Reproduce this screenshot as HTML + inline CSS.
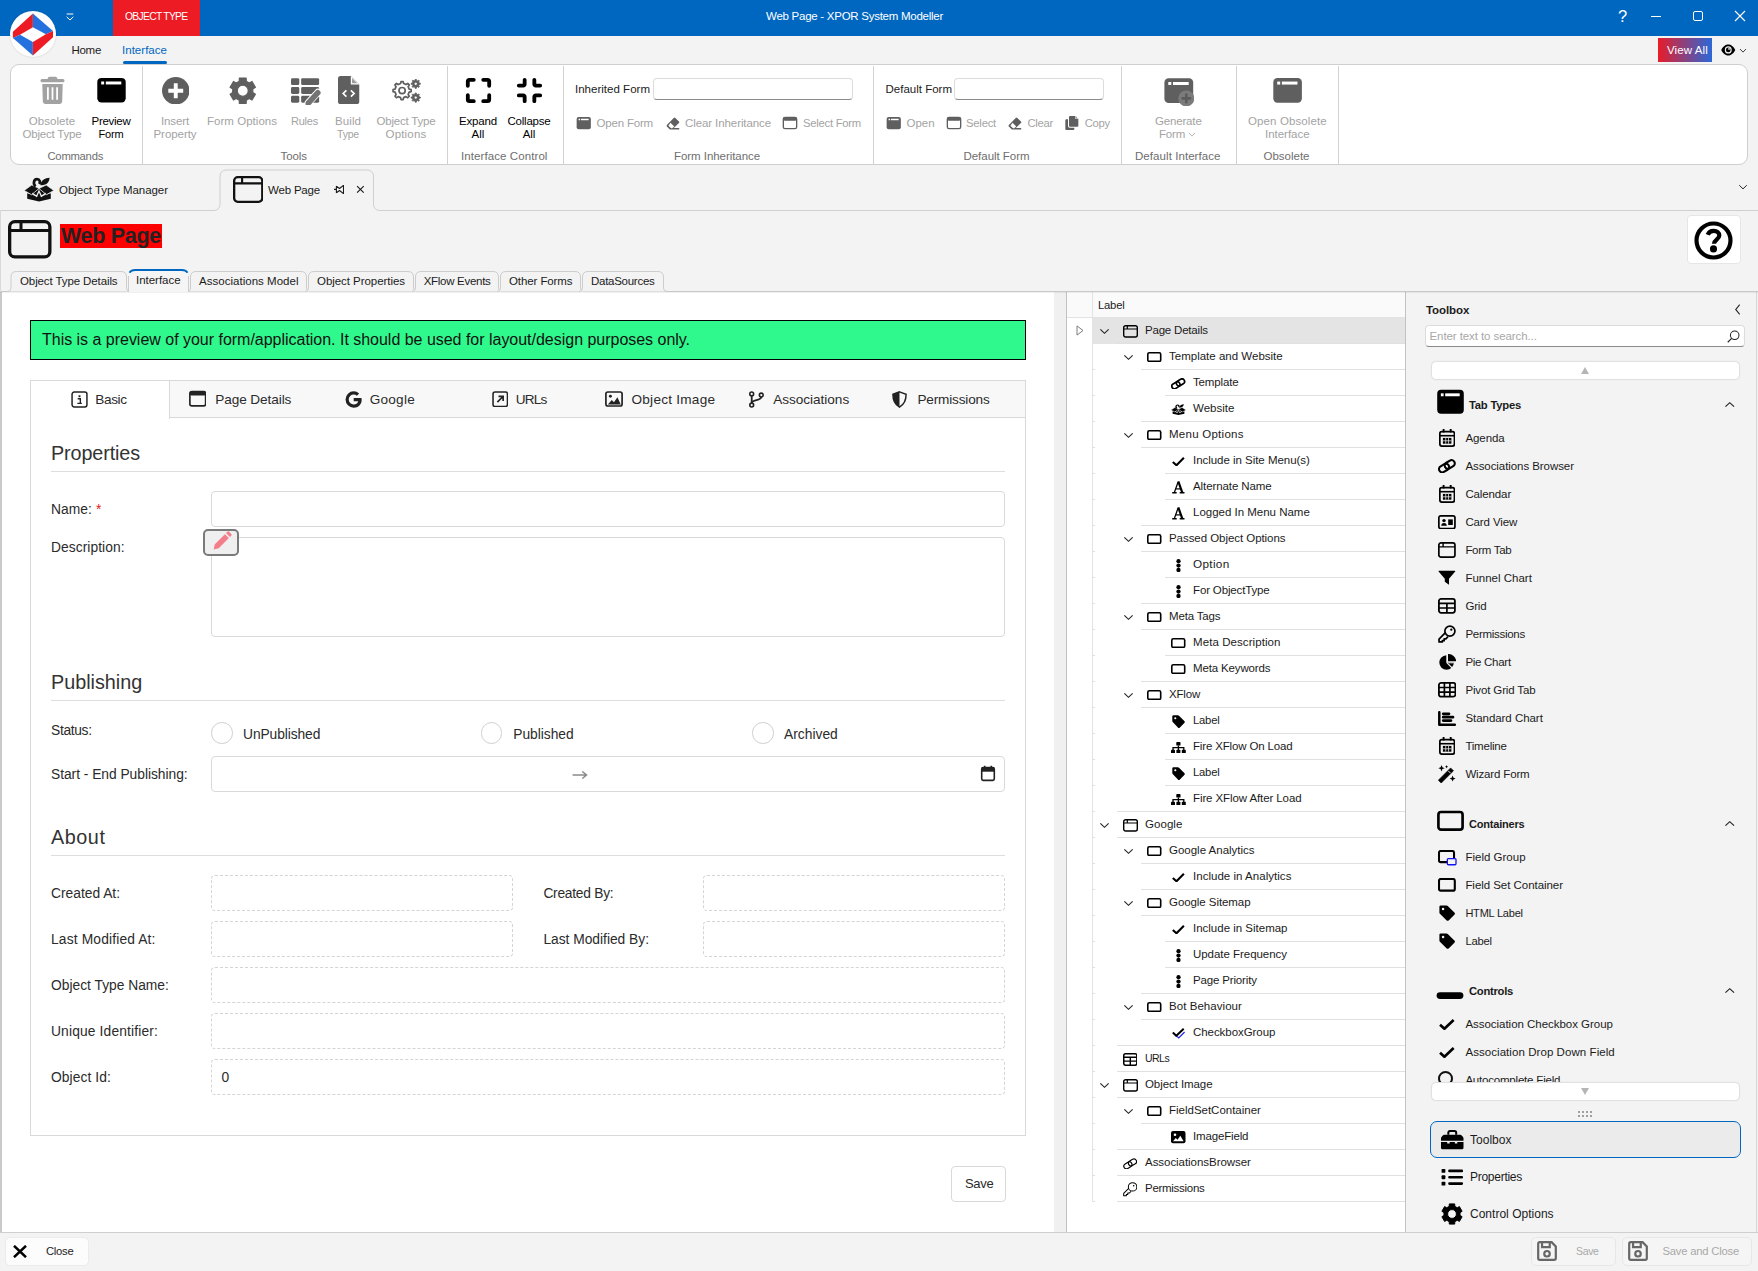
<!DOCTYPE html>
<html><head><meta charset="utf-8"><title>Web Page - XPOR System Modeller</title>
<style>
html,body{margin:0;padding:0;}
body{width:1758px;height:1271px;position:relative;overflow:hidden;background:#f3f3f3;font-family:"Liberation Sans",sans-serif;}
body div,body span.t,body svg{position:absolute;box-sizing:border-box;}
span.t{white-space:pre;}
</style></head><body>
<div style="left:0px;top:0px;width:1758px;height:36px;background:#0067c0;"></div>
<div style="left:113px;top:0px;width:87px;height:36px;background:#ec1b24;"></div>
<span class="t" style="left:125.00px;top:8.90px;font-size:10.4px;line-height:15px;color:#fff;letter-spacing:-0.746px;">OBJECT TYPE</span>
<span class="t" style="left:766.00px;top:8.00px;font-size:11.5px;line-height:16px;color:#fff;letter-spacing:-0.262px;">Web Page - XPOR System Modeller</span>
<svg style="left:66px;top:12.5px;" width="8" height="8" viewBox="0 0 8 8" preserveAspectRatio="none"><path d="M.700 1H7.300M.700 3.800l3.300 3.200L7.300 3.800" stroke="#fff" stroke-width="1" fill="none"/></svg>
<span class="t" style="left:1617.91px;top:4.80px;font-size:16.5px;line-height:23px;color:#fff;letter-spacing:0.000px;">?</span>
<div style="left:1651px;top:16px;width:10px;height:1px;background:#fff;"></div>
<div style="left:1693px;top:11px;width:10px;height:10px;border:1px solid #fff;border-radius:2px;"></div>
<svg style="left:1734px;top:10px;" width="12" height="12" viewBox="0 0 12 12" preserveAspectRatio="none"><path d="M1 1l10 10M11 1L1 11" stroke="#fff" stroke-width="1.100"/></svg>
<div style="left:10px;top:10.5px;width:46px;height:46px;border-radius:50%;background:#fdfdfd;box-shadow:0 0 2px rgba(0,0,0,.18);"></div>
<svg style="left:0px;top:0px;" width="66" height="66" viewBox="0 0 66 66" preserveAspectRatio="none"><path d="M32.900 13.600L12.900 31.700V38L20 34.700 32.900 27.200Z" fill="#ed1c24"/><path d="M32.900 13.600V27.200L45.900 34.250 53 31Z" fill="#2470de"/><path d="M53 31V37.200L32.900 55.600V41.900L45.900 34.250Z" fill="#ed1c24"/><path d="M12.900 38L32.900 55.600V41.900L20 34.700Z" fill="#2470de"/></svg>
<span class="t" style="left:71.50px;top:41.50px;font-size:11.5px;line-height:16px;color:#1b1b1b;letter-spacing:-0.294px;">Home</span>
<span class="t" style="left:122.00px;top:41.50px;font-size:11.5px;line-height:16px;color:#0067c0;letter-spacing:0.028px;">Interface</span>
<div style="left:123px;top:61px;width:43.5px;height:3px;background:#0067c0;border-radius:2px;"></div>
<div style="left:1658px;top:38px;width:54px;height:24px;background:linear-gradient(90deg,#e81c28 0%,#2a68d8 100%);"></div>
<span class="t" style="left:1667.00px;top:41.90px;font-size:11.5px;line-height:16px;color:#fff;letter-spacing:0.093px;">View All</span>
<svg style="left:1721px;top:44.3px;" width="14.5" height="11.8" viewBox="0 0 18 14" preserveAspectRatio="none"><path d="M.300 7C3 2 6 .500 9 .500s6 1.500 8.700 6.500C15 12 12 13.500 9 13.500S3 12 .300 7Z" fill="#000"/><circle cx="9" cy="7" r="4.300" fill="#f3f3f3"/><circle cx="9" cy="7" r="2.900" fill="#000"/><circle cx="10" cy="5.800" r="1.100" fill="#f3f3f3"/></svg>
<svg style="left:1739px;top:47.5px;" width="8" height="5.5" viewBox="0 0 12 8" preserveAspectRatio="none"><path d="M1.500 1.500L6 6l4.500-4.500" stroke="#111" stroke-width="1.200" fill="none"/></svg>
<div style="left:10px;top:64px;width:1737.5px;height:100.5px;background:#fff;border:1px solid #cfcfcf;border-radius:9px;"></div>
<div style="left:142.0px;top:65.5px;width:1px;height:98.5px;background:#d2d2d2;"></div>
<div style="left:447.0px;top:65.5px;width:1px;height:98.5px;background:#d2d2d2;"></div>
<div style="left:562.5px;top:65.5px;width:1px;height:98.5px;background:#d2d2d2;"></div>
<div style="left:872.5px;top:65.5px;width:1px;height:98.5px;background:#d2d2d2;"></div>
<div style="left:1121.0px;top:65.5px;width:1px;height:98.5px;background:#d2d2d2;"></div>
<div style="left:1236.0px;top:65.5px;width:1px;height:98.5px;background:#d2d2d2;"></div>
<div style="left:1338.0px;top:65.5px;width:1px;height:98.5px;background:#d2d2d2;"></div>
<svg style="left:40.0px;top:76px;" width="25" height="28" viewBox="0 0 24 26" preserveAspectRatio="none"><rect x="0.500" y="2.800" width="23" height="3" rx="1.400" fill="#a2a2a2"/><rect x="7.500" y="0.600" width="9" height="4" rx="1.600" fill="#a2a2a2"/><path d="M2.200 7.500h19.600l-.500 16.200a2.300 2.300 0 0 1-2.300 2.200H5a2.300 2.300 0 0 1-2.300-2.200Z" fill="#a2a2a2"/><path d="M7.600 10.500v11.500M12 10.500v11.500M16.400 10.500v11.500" stroke="#fff" stroke-width="1.700"/></svg>
<span class="t" style="left:28.75px;top:113.00px;font-size:11.5px;line-height:16px;color:#a3a3a3;letter-spacing:0.059px;">Obsolete</span>
<span class="t" style="left:22.50px;top:126.00px;font-size:11.5px;line-height:16px;color:#a3a3a3;letter-spacing:-0.196px;">Object Type</span>
<svg style="left:95.7px;top:74px;" width="31" height="31" viewBox="0 0 24 24" preserveAspectRatio="none"><rect x="1" y="3" width="22" height="19" rx="3.200" fill="#000"/><rect x="7.600" y="5.800" width="12" height="2.300" fill="#fff"/><rect x="4" y="5.800" width="2.300" height="2.300" fill="#fff"/></svg>
<span class="t" style="left:91.50px;top:113.00px;font-size:11.5px;line-height:16px;color:#000;letter-spacing:-0.271px;">Preview</span>
<span class="t" style="left:98.50px;top:126.00px;font-size:11.0px;line-height:16px;color:#000;letter-spacing:-0.165px;">Form</span>
<svg style="left:161.55px;top:76.5px;" width="27.5" height="27.5" viewBox="0 0 24 24" preserveAspectRatio="none"><circle cx="12" cy="12" r="12" fill="#5f5f5f"/><path d="M12 5.500v13M5.500 12h13" stroke="#fff" stroke-width="3.400"/></svg>
<span class="t" style="left:161.00px;top:113.00px;font-size:11.5px;line-height:16px;color:#a3a3a3;letter-spacing:-0.126px;">Insert</span>
<span class="t" style="left:153.50px;top:126.00px;font-size:11.5px;line-height:16px;color:#a3a3a3;letter-spacing:-0.057px;">Property</span>
<svg style="left:228.75px;top:76.5px;" width="27.5" height="27.5" viewBox="0 0 27.500 27.500" preserveAspectRatio="none"><path d="M10.24 4.17 L10.36 1.10 L17.14 1.10 L17.26 4.17 L20.29 5.92 L23.01 4.49 L26.40 10.36 L23.80 12.00 L23.80 15.50 L26.40 17.14 L23.01 23.01 L20.29 21.58 L17.26 23.33 L17.14 26.40 L10.36 26.40 L10.24 23.33 L7.21 21.58 L4.49 23.01 L1.10 17.14 L3.70 15.50 L3.70 12.00 L1.10 10.36 L4.49 4.49 L7.21 5.92Z M8.25 13.75 a5.5 5.5 0 1 0 11.0 0 a5.5 5.5 0 1 0 -11.0 0Z" fill="#5f5f5f" fill-rule="evenodd" stroke="#5f5f5f" stroke-width="1.200" stroke-linejoin="round"/></svg>
<span class="t" style="left:207.00px;top:113.00px;font-size:11.5px;line-height:16px;color:#a3a3a3;letter-spacing:0.029px;">Form Options</span>
<svg style="left:291.0px;top:77.8px;" width="29.6" height="27.6" viewBox="0 0 30 28" preserveAspectRatio="none"><g fill="#5f5f5f"><rect x="0" y=".200" width="8.400" height="7" rx="1.400"/><rect x="10.300" y=".200" width="18.200" height="7" rx="1.400"/><rect x="0" y="9.200" width="8.400" height="7" rx="1.400"/><rect x="10.300" y="9.200" width="18.200" height="7" rx="1.400"/><rect x="0" y="18.100" width="8.400" height="7" rx="1.400"/><rect x="10.300" y="18.100" width="18.200" height="7" rx="1.400"/></g><path d="M17.500 25.300L27.300 14.600" stroke="#fff" stroke-width="7.400" stroke-linecap="round"/><path d="M17.600 25.400L27.200 14.900" stroke="#737373" stroke-width="5.600" stroke-linecap="round"/><path d="M14.600 27.800l1.200-4.600 3.600 3.400Z" fill="#737373"/></svg>
<span class="t" style="left:291.00px;top:113.00px;font-size:11.0px;line-height:16px;color:#a3a3a3;letter-spacing:-0.224px;">Rules</span>
<svg style="left:338.475px;top:76px;" width="21.25" height="28" viewBox="0 0 21.250 28" preserveAspectRatio="none"><path d="M2.600 0H12.800L21.250 8.450V25.400a2.600 2.600 0 0 1-2.600 2.600H2.600A2.600 2.600 0 0 1 0 25.400V2.600A2.600 2.600 0 0 1 2.600 0Z" fill="#5f5f5f"/><path d="M12.800 0V8.450H21.250Z" fill="#fff"/><path d="M14 2V7.250H19.250Z" fill="#9c9c9c"/><path d="M8.400 14.300l-3.200 3.200 3.200 3.200M12.900 14.300l3.200 3.200-3.200 3.200" stroke="#fff" stroke-width="1.700" fill="none"/></svg>
<span class="t" style="left:335.00px;top:113.00px;font-size:11.5px;line-height:16px;color:#a3a3a3;letter-spacing:0.086px;">Build</span>
<span class="t" style="left:337.00px;top:126.00px;font-size:10.5px;line-height:16px;color:#a3a3a3;letter-spacing:-0.191px;">Type</span>
<svg style="left:391.5px;top:79px;" width="29" height="24" viewBox="0 0 29 24" preserveAspectRatio="none"><path d="M8.58 4.56 L9.03 2.56 L11.17 2.56 L11.62 4.56 L14.01 5.55 L15.73 4.45 L17.25 5.97 L16.15 7.69 L17.14 10.08 L19.14 10.53 L19.14 12.67 L17.14 13.12 L16.15 15.51 L17.25 17.23 L15.73 18.75 L14.01 17.65 L11.62 18.64 L11.17 20.64 L9.03 20.64 L8.58 18.64 L6.19 17.65 L4.47 18.75 L2.95 17.23 L4.05 15.51 L3.06 13.12 L1.06 12.67 L1.06 10.53 L3.06 10.08 L4.05 7.69 L2.95 5.97 L4.47 4.45 L6.19 5.55Z" fill="none" stroke="#5f5f5f" stroke-width="1.700" stroke-linejoin="round"/><circle cx="10.100" cy="11.600" r="3.100" fill="none" stroke="#5f5f5f" stroke-width="1.700"/><path d="M22.93 1.40 L23.23 0.13 L24.27 0.13 L24.57 1.40 L25.58 1.82 L26.69 1.13 L27.42 1.86 L26.73 2.97 L27.15 3.98 L28.42 4.28 L28.42 5.32 L27.15 5.62 L26.73 6.63 L27.42 7.74 L26.69 8.47 L25.58 7.78 L24.57 8.20 L24.27 9.47 L23.23 9.47 L22.93 8.20 L21.92 7.78 L20.81 8.47 L20.08 7.74 L20.77 6.63 L20.35 5.62 L19.08 5.32 L19.08 4.28 L20.35 3.98 L20.77 2.97 L20.08 1.86 L20.81 1.13 L21.92 1.82Z M22.25 4.80 a1.5 1.5 0 1 0 3.0 0 a1.5 1.5 0 1 0 -3.0 0Z" fill="#5f5f5f" fill-rule="evenodd" stroke="#5f5f5f" stroke-width=".700" stroke-linejoin="round"/><path d="M22.93 15.20 L23.23 13.93 L24.27 13.93 L24.57 15.20 L25.58 15.62 L26.69 14.93 L27.42 15.66 L26.73 16.77 L27.15 17.78 L28.42 18.08 L28.42 19.12 L27.15 19.42 L26.73 20.43 L27.42 21.54 L26.69 22.27 L25.58 21.58 L24.57 22.00 L24.27 23.27 L23.23 23.27 L22.93 22.00 L21.92 21.58 L20.81 22.27 L20.08 21.54 L20.77 20.43 L20.35 19.42 L19.08 19.12 L19.08 18.08 L20.35 17.78 L20.77 16.77 L20.08 15.66 L20.81 14.93 L21.92 15.62Z M22.25 18.60 a1.5 1.5 0 1 0 3.0 0 a1.5 1.5 0 1 0 -3.0 0Z" fill="#5f5f5f" fill-rule="evenodd" stroke="#5f5f5f" stroke-width=".700" stroke-linejoin="round"/></svg>
<span class="t" style="left:376.50px;top:113.00px;font-size:11.5px;line-height:16px;color:#a3a3a3;letter-spacing:-0.196px;">Object Type</span>
<span class="t" style="left:385.50px;top:126.00px;font-size:11.5px;line-height:16px;color:#a3a3a3;letter-spacing:0.196px;">Options</span>
<svg style="left:464.5px;top:77px;" width="27" height="27" viewBox="0 0 24 24" preserveAspectRatio="none"><path d="M2.500 7.800V4a1.500 1.500 0 0 1 1.500-1.500H7.800M16.200 2.500H20a1.500 1.500 0 0 1 1.500 1.500V7.800M21.500 16.200V20a1.500 1.500 0 0 1-1.500 1.500H16.200M7.800 21.500H4a1.500 1.500 0 0 1-1.500-1.500V16.200" stroke="#000" stroke-width="3.400" fill="none" stroke-linecap="round"/></svg>
<span class="t" style="left:459.00px;top:113.00px;font-size:11.5px;line-height:16px;color:#000;letter-spacing:-0.167px;">Expand</span>
<span class="t" style="left:471.50px;top:126.00px;font-size:11.5px;line-height:16px;color:#000;letter-spacing:0.073px;">All</span>
<svg style="left:515.5px;top:77px;" width="27" height="27" viewBox="0 0 24 24" preserveAspectRatio="none"><path d="M2.500 7.600H6.500a1.200 1.200 0 0 0 1.200-1.200V2.500M16.300 2.500V6.400a1.200 1.200 0 0 0 1.200 1.200H21.500M21.500 16.400H17.500a1.200 1.200 0 0 0-1.200 1.200V21.500M7.700 21.500V17.600a1.200 1.200 0 0 0-1.200-1.200H2.500" stroke="#000" stroke-width="3.400" fill="none" stroke-linecap="round"/></svg>
<span class="t" style="left:507.50px;top:113.00px;font-size:11.5px;line-height:16px;color:#000;letter-spacing:-0.218px;">Collapse</span>
<span class="t" style="left:522.75px;top:126.00px;font-size:11.5px;line-height:16px;color:#000;letter-spacing:-0.094px;">All</span>
<span class="t" style="left:47.50px;top:148.00px;font-size:11.25px;line-height:16px;color:#6e6e6e;letter-spacing:-0.252px;">Commands</span>
<span class="t" style="left:280.50px;top:148.00px;font-size:11.5px;line-height:16px;color:#6e6e6e;letter-spacing:-0.069px;">Tools</span>
<span class="t" style="left:461.00px;top:148.00px;font-size:11.5px;line-height:16px;color:#6e6e6e;letter-spacing:0.088px;">Interface Control</span>
<span class="t" style="left:674.00px;top:148.00px;font-size:11.5px;line-height:16px;color:#6e6e6e;letter-spacing:-0.057px;">Form Inheritance</span>
<span class="t" style="left:963.50px;top:148.00px;font-size:11.5px;line-height:16px;color:#6e6e6e;letter-spacing:-0.038px;">Default Form</span>
<span class="t" style="left:1135.00px;top:148.00px;font-size:11.5px;line-height:16px;color:#6e6e6e;letter-spacing:0.066px;">Default Interface</span>
<span class="t" style="left:1263.50px;top:148.00px;font-size:11.5px;line-height:16px;color:#6e6e6e;letter-spacing:-0.003px;">Obsolete</span>
<span class="t" style="left:575.00px;top:81.00px;font-size:11.5px;line-height:16px;color:#1b1b1b;letter-spacing:0.016px;">Inherited Form</span>
<div style="left:653px;top:78px;width:199.5px;height:21.5px;background:#fff;border:1px solid #dcdcdc;border-bottom:1px solid #8a8a8a;border-radius:4px;"></div>
<svg style="left:575.5px;top:115px;" width="15.5" height="15.5" viewBox="0 0 24 24" preserveAspectRatio="none"><rect x="1" y="3" width="22" height="19" rx="3.200" fill="#5f5f5f"/><rect x="7.600" y="5.800" width="12" height="2.300" fill="#fff"/><rect x="4" y="5.800" width="2.300" height="2.300" fill="#fff"/></svg>
<span class="t" style="left:596.50px;top:115.00px;font-size:11.5px;line-height:16px;color:#a3a3a3;letter-spacing:-0.184px;">Open Form</span>
<svg style="left:664.5px;top:115.5px;" width="15.5" height="15" viewBox="0 0 24 24" preserveAspectRatio="none"><path d="M13.500 3.200a1.800 1.800 0 0 1 2.500 0l5.600 5.600a1.800 1.800 0 0 1 0 2.500l-8 8H22v2.200H7.500l-4.600-4.600a1.800 1.800 0 0 1 0-2.500Z" fill="#5f5f5f"/><path d="M5.200 15.600l4.200 4.100h1.800l3.100-3.100-5.700-5.700Z" fill="#fff"/></svg>
<span class="t" style="left:685.00px;top:115.00px;font-size:11.5px;line-height:16px;color:#a3a3a3;letter-spacing:-0.092px;">Clear Inheritance</span>
<svg style="left:782px;top:115px;" width="16" height="16" viewBox="0 0 24 24" preserveAspectRatio="none"><rect x="2" y="3.5" width="20" height="17" rx="2.6" fill="none" stroke="#5f5f5f" stroke-width="2"/><rect x="2" y="3.5" width="20" height="5" rx="2" fill="#5f5f5f"/></svg>
<span class="t" style="left:803.00px;top:115.00px;font-size:11.25px;line-height:16px;color:#a3a3a3;letter-spacing:-0.240px;">Select Form</span>
<span class="t" style="left:885.50px;top:81.00px;font-size:11.5px;line-height:16px;color:#1b1b1b;letter-spacing:0.004px;">Default Form</span>
<div style="left:954px;top:78px;width:150px;height:21.5px;background:#fff;border:1px solid #dcdcdc;border-bottom:1px solid #8a8a8a;border-radius:4px;"></div>
<svg style="left:886px;top:115px;" width="15.5" height="15.5" viewBox="0 0 24 24" preserveAspectRatio="none"><rect x="1" y="3" width="22" height="19" rx="3.200" fill="#5f5f5f"/><rect x="7.600" y="5.800" width="12" height="2.300" fill="#fff"/><rect x="4" y="5.800" width="2.300" height="2.300" fill="#fff"/></svg>
<span class="t" style="left:906.50px;top:115.00px;font-size:11.5px;line-height:16px;color:#a3a3a3;letter-spacing:-0.033px;">Open</span>
<svg style="left:945.5px;top:115px;" width="16" height="16" viewBox="0 0 24 24" preserveAspectRatio="none"><rect x="2" y="3.5" width="20" height="17" rx="2.6" fill="none" stroke="#5f5f5f" stroke-width="2"/><rect x="2" y="3.5" width="20" height="5" rx="2" fill="#5f5f5f"/></svg>
<span class="t" style="left:966.00px;top:115.00px;font-size:11.25px;line-height:16px;color:#a3a3a3;letter-spacing:-0.211px;">Select</span>
<svg style="left:1006.5px;top:115.5px;" width="15.5" height="15" viewBox="0 0 24 24" preserveAspectRatio="none"><path d="M13.500 3.200a1.800 1.800 0 0 1 2.500 0l5.600 5.600a1.800 1.800 0 0 1 0 2.500l-8 8H22v2.200H7.500l-4.600-4.600a1.800 1.800 0 0 1 0-2.500Z" fill="#5f5f5f"/><path d="M5.200 15.600l4.200 4.100h1.800l3.100-3.100-5.700-5.700Z" fill="#fff"/></svg>
<span class="t" style="left:1027.50px;top:115.00px;font-size:11.25px;line-height:16px;color:#a3a3a3;letter-spacing:-0.276px;">Clear</span>
<svg style="left:1063.5px;top:115px;" width="16" height="16" viewBox="0 0 24 24" preserveAspectRatio="none"><path d="M9 1.500h8l4.500 4.500V16a1.500 1.500 0 0 1-1.500 1.500H9A1.500 1.500 0 0 1 7.500 16V3A1.500 1.500 0 0 1 9 1.500Z" fill="#5f5f5f"/><path d="M17 1.500V6h4.500" fill="#fff"/><path d="M17.700 2.700V5.300h2.600Z" fill="#5f5f5f"/><path d="M6 6.500H3.500A1.500 1.500 0 0 0 2 8v13a1.500 1.500 0 0 0 1.500 1.500H14a1.500 1.500 0 0 0 1.500-1.500v-2H8.500A2.500 2.500 0 0 1 6 16.500Z" fill="#5f5f5f"/></svg>
<span class="t" style="left:1084.70px;top:115.00px;font-size:11.25px;line-height:16px;color:#a3a3a3;letter-spacing:-0.240px;">Copy</span>
<svg style="left:1164px;top:77.5px;" width="30" height="28.5" viewBox="0 0 30 28.500" preserveAspectRatio="none"><rect x=".400" y=".300" width="28.800" height="24.800" rx="4.200" fill="#5f5f5f"/><rect x="9" y="4" width="15.700" height="3" fill="#fff"/><rect x="4.300" y="4" width="3" height="3" fill="#fff"/><circle cx="22.300" cy="20.400" r="8" fill="#7b7b7b"/><path d="M22.300 15.600v9.600M17.500 20.400h9.600" stroke="#5c5c5c" stroke-width="2.600"/></svg>
<span class="t" style="left:1155.00px;top:113.00px;font-size:11.5px;line-height:16px;color:#a3a3a3;letter-spacing:-0.168px;">Generate</span>
<span class="t" style="left:1159.00px;top:126.00px;font-size:11.5px;line-height:16px;color:#a3a3a3;letter-spacing:-0.207px;">Form</span>
<svg style="left:1187.5px;top:132px;" width="8" height="5.5" viewBox="0 0 12 8" preserveAspectRatio="none"><path d="M1.500 1.500L6 6l4.500-4.500" stroke="#a3a3a3" stroke-width="1.200" fill="none"/></svg>
<svg style="left:1271.9px;top:73.9px;" width="31.2" height="31.3" viewBox="0 0 24 24" preserveAspectRatio="none"><rect x="1" y="3" width="22" height="19" rx="3.200" fill="#5f5f5f"/><rect x="7.600" y="5.800" width="12" height="2.300" fill="#fff"/><rect x="4" y="5.800" width="2.300" height="2.300" fill="#fff"/></svg>
<span class="t" style="left:1248.00px;top:113.00px;font-size:11.5px;line-height:16px;color:#a3a3a3;letter-spacing:0.112px;">Open Obsolete</span>
<span class="t" style="left:1265.05px;top:126.00px;font-size:11.5px;line-height:16px;color:#a3a3a3;letter-spacing:-0.027px;">Interface</span>
<svg style="left:0px;top:166px;" width="1758" height="46" viewBox="0 0 1758 46" preserveAspectRatio="none"><path d="M0 44.500H214a6 6 0 0 0 6-6V10a6 6 0 0 1 6-6H367.500a6 6 0 0 1 6 6V38.500a6 6 0 0 0 6 6H1758" fill="none" stroke="#cfcfcf" stroke-width="1"/></svg>
<svg style="left:24px;top:177.4px;" width="30" height="24.6" viewBox="0 0 30 24.600" preserveAspectRatio="none"><path d="M3.200 16.300L15 20 26.800 16.300V21.700L15 24.600 3.200 21.700Z" fill="#111"/><path d="M7.600 17.300L15 11.800 22.400 17.300 15 20.200Z" fill="#111"/><path d="M15 11.500L7.800 8 .200 13.500 7.600 17.700Z" fill="#111" stroke="#f3f3f3" stroke-width=".700"/><path d="M15 11.500L22.200 8 29.800 13.500 22.400 17.700Z" fill="#111" stroke="#f3f3f3" stroke-width=".700"/><path d="M8.300 16.400L12.600 19.300 15 14 17.400 19.300 21.700 16.400" fill="none" stroke="#f3f3f3" stroke-width="1.300"/><path d="M11.700 9.300C8.800 7.300 9.600 2.200 13 2.200 16 2.200 16.500 5 15.200 7" fill="none" stroke="#111" stroke-width="2.700"/><path d="M16.400 8.200C16.800 3.600 20.800 .800 25.600 .800 25.200 5.200 22.600 8.800 16.400 8.200Z" fill="#111"/></svg>
<span class="t" style="left:59.00px;top:182.00px;font-size:11.5px;line-height:16px;color:#1b1b1b;letter-spacing:-0.038px;">Object Type Manager</span>
<svg style="left:232.5px;top:176.2px;" width="30.8" height="28" viewBox="0 0 44 40" preserveAspectRatio="none"><rect x="1.650" y="1.650" width="40.200" height="35.200" rx="5.200" fill="none" stroke="#111" stroke-width="3.300"/><path d="M1.650 10.600H41.850M13 1.650V10.600" stroke="#111" stroke-width="3" fill="none"/></svg>
<span class="t" style="left:268.00px;top:182.00px;font-size:11.5px;line-height:16px;color:#1b1b1b;letter-spacing:-0.186px;">Web Page</span>
<svg style="left:334px;top:185px;" width="10" height="9" viewBox="0 0 10 9" preserveAspectRatio="none"><path d="M0 4.400H2.300M2.400 1V8M2.400 1.300L5.500 3.500 9.500 .400M2.400 7.700L5.500 5.500 9.500 8.600M9.500 0V9" fill="none" stroke="#1a1a1a" stroke-width="1.100" stroke-linejoin="round"/></svg>
<svg style="left:356.1px;top:185.1px;" width="8.8" height="8.8" viewBox="0 0 12 12" preserveAspectRatio="none"><path d="M1.500 1.500l9 9M10.500 1.500l-9 9" stroke="#1a1a1a" stroke-width="1.500" fill="none"/></svg>
<svg style="left:1738px;top:183.8px;" width="10" height="6.5" viewBox="0 0 12 8" preserveAspectRatio="none"><path d="M1.500 1.500L6 6l4.500-4.500" stroke="#222" stroke-width="1.200" fill="none"/></svg>
<svg style="left:8px;top:220px;" width="44" height="40" viewBox="0 0 44 40" preserveAspectRatio="none"><rect x="1.650" y="1.650" width="40.200" height="35.200" rx="5.200" fill="none" stroke="#111" stroke-width="3.300"/><path d="M1.650 10.600H41.850M13 1.650V10.600" stroke="#111" stroke-width="3" fill="none"/></svg>
<div style="left:60px;top:224px;width:102px;height:23.5px;background:#f00;"></div>
<span class="t" style="left:61.00px;top:221.00px;font-size:21.5px;line-height:31px;color:#222;letter-spacing:-0.294px;font-weight:bold;">Web Page</span>
<div style="left:1686.5px;top:214.5px;width:54px;height:49px;background:#fff;border:1px solid #e6e6e6;border-radius:4px;"></div>
<svg style="left:1692.4px;top:219.4px;" width="43" height="43" viewBox="0 0 40 40" preserveAspectRatio="none"><circle cx="20" cy="20" r="15.800" fill="none" stroke="#000" stroke-width="3.900"/><path d="M14.600 14.600c1-2.600 3-3.600 5.600-3.600 3 0 5.200 1.700 5.200 4.400 0 3.600-4.900 4-4.900 7.600" fill="none" stroke="#000" stroke-width="3.900"/><circle cx="20" cy="27.800" r="3.300" fill="#000"/></svg>
<div style="left:0px;top:291px;width:1758px;height:1px;background:#c9c9c9;"></div>
<svg style="left:0px;top:0px;" width="700" height="293" viewBox="0 0 700 293" preserveAspectRatio="none"><path d="M7.5 291.500Q11.0 291.500 11.0 288V277Q11.0 271.500 16.5 271.500H121.0Q126.5 271.500 126.5 277V288Q126.5 291.500 130.0 291.500" fill="#f3f3f3" stroke="#cdcdcd" stroke-width="1"/><path d="M187.0 291.500Q190.5 291.500 190.5 288V277Q190.5 271.500 196.0 271.500H301.0Q306.5 271.500 306.5 277V288Q306.5 291.500 310.0 291.500" fill="#f3f3f3" stroke="#cdcdcd" stroke-width="1"/><path d="M305.0 291.500Q308.5 291.500 308.5 288V277Q308.5 271.500 314.0 271.500H408.0Q413.5 271.500 413.5 277V288Q413.5 291.500 417.0 291.500" fill="#f3f3f3" stroke="#cdcdcd" stroke-width="1"/><path d="M412.0 291.500Q415.5 291.500 415.5 288V277Q415.5 271.500 421.0 271.500H493.0Q498.5 271.500 498.5 277V288Q498.5 291.500 502.0 291.500" fill="#f3f3f3" stroke="#cdcdcd" stroke-width="1"/><path d="M497.0 291.500Q500.5 291.500 500.5 288V277Q500.5 271.500 506.0 271.500H575.0Q580.5 271.500 580.5 277V288Q580.5 291.500 584.0 291.500" fill="#f3f3f3" stroke="#cdcdcd" stroke-width="1"/><path d="M579.0 291.500Q582.5 291.500 582.5 288V277Q582.5 271.500 588.0 271.500H658.0Q663.5 271.500 663.5 277V288Q663.5 291.500 667.0 291.500" fill="#f3f3f3" stroke="#cdcdcd" stroke-width="1"/><path d="M128.5 292V276Q128.5 270 134.5 270H182.5Q188.5 270 188.5 276V292Z" fill="#f5f5f5" stroke="none"/><path d="M128.5 292V276M188.5 276V292" fill="none" stroke="#cdcdcd" stroke-width="1"/><path d="M129.7 272.800Q130.5 270 135.5 270H181.5Q186.5 270 187.3 272.800" fill="none" stroke="#0067c0" stroke-width="2"/></svg>
<span class="t" style="left:20.00px;top:273.00px;font-size:11.5px;line-height:16px;color:#1b1b1b;letter-spacing:-0.105px;">Object Type Details</span>
<span class="t" style="left:136.00px;top:272.00px;font-size:11.5px;line-height:16px;color:#1b1b1b;letter-spacing:-0.027px;">Interface</span>
<span class="t" style="left:199.00px;top:273.00px;font-size:11.5px;line-height:16px;color:#1b1b1b;letter-spacing:0.024px;">Associations Model</span>
<span class="t" style="left:317.00px;top:273.00px;font-size:11.5px;line-height:16px;color:#1b1b1b;letter-spacing:-0.049px;">Object Properties</span>
<span class="t" style="left:423.70px;top:273.00px;font-size:11.5px;line-height:16px;color:#1b1b1b;letter-spacing:-0.292px;">XFlow Events</span>
<span class="t" style="left:509.00px;top:273.00px;font-size:11.5px;line-height:16px;color:#1b1b1b;letter-spacing:-0.094px;">Other Forms</span>
<span class="t" style="left:591.00px;top:273.00px;font-size:11.5px;line-height:16px;color:#1b1b1b;letter-spacing:-0.270px;">DataSources</span>
<div style="left:0px;top:210px;width:1px;height:1022px;background:#d9d9d9;"></div>
<div style="left:0px;top:292px;width:1054px;height:940px;background:#fff;border-left:2px solid #c9c9c9;"></div>
<div style="left:1054px;top:292px;width:12px;height:940px;background:#f0f0f0;"></div>
<div style="left:0px;top:1231.5px;width:1758px;height:1px;background:#cfcfcf;"></div>
<div style="left:30px;top:320px;width:996px;height:40px;background:#2ff98c;border:1px solid #000;"></div>
<span class="t" style="left:42.00px;top:329.00px;font-size:16px;line-height:22px;color:#111;letter-spacing:-0.019px;">This is a preview of your form/application. It should be used for layout/design purposes only.</span>
<div style="left:30px;top:380px;width:996px;height:755.5px;background:#fff;border:1px solid #d9d9d9;"></div>
<div style="left:30px;top:380px;width:996px;height:38px;background:#f8f8f8;border:1px solid #d9d9d9;"></div>
<div style="left:30px;top:380px;width:140px;height:38.5px;background:#fff;border:1px solid #d9d9d9;border-bottom:none;"></div>
<svg style="left:71px;top:390.5px;" width="17" height="17" viewBox="0 0 16 16" preserveAspectRatio="none"><rect x="1" y="1" width="14" height="14" rx="2" fill="none" stroke="#222" stroke-width="1.400"/><rect x="7.100" y="4" width="1.800" height="1.800" fill="#222"/><path d="M6.300 7.300h2.500v4.200M6 11.700h4.200" stroke="#222" stroke-width="1.300" fill="none"/></svg>
<span class="t" style="left:95.30px;top:390.30px;font-size:13.6px;line-height:19px;color:#2b2b2b;letter-spacing:-0.371px;">Basic</span>
<svg style="left:188.8px;top:390.25px;" width="17.5" height="17.5" viewBox="0 0 16 16" preserveAspectRatio="none"><rect x="0.800" y="1.500" width="14.400" height="13" rx="1.800" fill="none" stroke="#222" stroke-width="1.500"/><rect x="0.800" y="1.500" width="14.400" height="3.600" rx="1.500" fill="#222"/></svg>
<span class="t" style="left:215.30px;top:390.30px;font-size:13.6px;line-height:19px;color:#2b2b2b;letter-spacing:-0.092px;">Page Details</span>
<svg style="left:345px;top:390.5px;" width="17" height="17" viewBox="0 0 16 16" preserveAspectRatio="none"><path d="M15.400 6.700H8.200v2.900h4.200c-.5 2-2.100 3.100-4.200 3.100a4.700 4.700 0 0 1 0-9.400c1.200 0 2.200.4 3 1.100l2.100-2.100A7.700 7.700 0 0 0 8.200.300a7.700 7.700 0 0 0 0 15.400c4.400 0 7.500-3.100 7.500-7.500 0-.5-.1-1-.3-1.500Z" fill="#222"/></svg>
<span class="t" style="left:369.70px;top:390.30px;font-size:13.6px;line-height:19px;color:#2b2b2b;letter-spacing:0.241px;">Google</span>
<svg style="left:491.5px;top:390.75px;" width="16.5" height="16.5" viewBox="0 0 16 16" preserveAspectRatio="none"><rect x="1" y="1" width="14" height="14" rx="2" fill="none" stroke="#222" stroke-width="1.500"/><path d="M5.200 10.800l5.200-5.200M6.300 5.200h4.500v4.500" stroke="#222" stroke-width="1.600" fill="none"/></svg>
<span class="t" style="left:515.70px;top:390.30px;font-size:13.6px;line-height:19px;color:#2b2b2b;letter-spacing:-0.827px;">URLs</span>
<svg style="left:605px;top:390.0px;" width="18" height="18" viewBox="0 0 16 16" preserveAspectRatio="none"><rect x="0.800" y="1.800" width="14.400" height="12.400" rx="1.800" fill="none" stroke="#222" stroke-width="1.500"/><circle cx="4.800" cy="5.600" r="1.300" fill="#222"/><path d="M2.500 12.800l3.500-4 2 2 3-4.300 3 6.300Z" fill="#222"/></svg>
<span class="t" style="left:631.50px;top:390.30px;font-size:13.6px;line-height:19px;color:#2b2b2b;letter-spacing:0.244px;">Object Image</span>
<svg style="left:748px;top:390.5px;" width="17" height="17" viewBox="0 0 16 16" preserveAspectRatio="none"><circle cx="3.500" cy="2.800" r="1.800" fill="none" stroke="#222" stroke-width="1.500"/><circle cx="3.500" cy="13.200" r="1.800" fill="none" stroke="#222" stroke-width="1.500"/><circle cx="12.500" cy="3.800" r="1.800" fill="none" stroke="#222" stroke-width="1.500"/><path d="M3.500 4.600v6.800M12.500 5.600c0 3.500-9 2.500-9 5.800" fill="none" stroke="#222" stroke-width="1.700"/></svg>
<span class="t" style="left:773.20px;top:390.30px;font-size:13.6px;line-height:19px;color:#2b2b2b;letter-spacing:-0.029px;">Associations</span>
<svg style="left:891.4px;top:390.5px;" width="17" height="17" viewBox="0 0 16 16" preserveAspectRatio="none"><path d="M8 .800l6.200 2.300c0 5.500-2 9.800-6.200 12.100C3.800 12.900 1.800 8.600 1.800 3.100Z" fill="none" stroke="#222" stroke-width="1.400"/><path d="M8 .800v14.400C3.800 12.900 1.800 8.600 1.800 3.100Z" fill="#222"/></svg>
<span class="t" style="left:917.40px;top:390.30px;font-size:13.6px;line-height:19px;color:#2b2b2b;letter-spacing:-0.160px;">Permissions</span>
<span class="t" style="left:51.00px;top:439.00px;font-size:19.8px;line-height:28px;color:#333;letter-spacing:-0.124px;">Properties</span>
<div style="left:51px;top:471px;width:954px;height:1px;background:#dedede;"></div>
<span class="t" style="left:51.00px;top:499.70px;font-size:13.8px;line-height:19px;color:#2b2b2b;letter-spacing:0.071px;">Name:</span>
<span class="t" style="left:96.00px;top:500.20px;font-size:13.8px;line-height:19px;color:#e02020;letter-spacing:0.000px;">*</span>
<div style="left:211px;top:491px;width:794px;height:36px;border:1px solid #d9d9d9;border-radius:4px;background:#fff;"></div>
<span class="t" style="left:51.00px;top:537.70px;font-size:13.8px;line-height:19px;color:#2b2b2b;letter-spacing:0.062px;">Description:</span>
<div style="left:211px;top:537px;width:794px;height:100px;border:1px solid #d9d9d9;border-radius:4px;background:#fff;"></div>
<div style="left:203px;top:529px;width:36px;height:26.5px;border:2px solid #7a7a7a;border-radius:5px;background:#efefef;"></div>
<svg style="left:210.5px;top:531.2px;" width="21" height="21" viewBox="0 0 16 16" preserveAspectRatio="none"><path d="M2 14l.9-3.900 7.700-7.700 3 3-7.700 7.700ZM11.400 1.600l.9-.9a1.200 1.200 0 0 1 1.700 0l1.300 1.300a1.200 1.200 0 0 1 0 1.700l-.9.900Z" fill="#f37d8a"/></svg>
<span class="t" style="left:51.00px;top:667.50px;font-size:19.8px;line-height:28px;color:#333;letter-spacing:-0.006px;">Publishing</span>
<div style="left:51px;top:700px;width:954px;height:1px;background:#dedede;"></div>
<span class="t" style="left:51.00px;top:720.90px;font-size:13.8px;line-height:19px;color:#2b2b2b;letter-spacing:-0.322px;">Status:</span>
<div style="left:211px;top:722px;width:21.5px;height:21.5px;border:1px solid #cfcfcf;border-radius:50%;background:#fff;"></div>
<span class="t" style="left:243.00px;top:724.70px;font-size:13.8px;line-height:19px;color:#2b2b2b;letter-spacing:-0.086px;">UnPublished</span>
<div style="left:480.7px;top:722px;width:21.5px;height:21.5px;border:1px solid #cfcfcf;border-radius:50%;background:#fff;"></div>
<span class="t" style="left:513.30px;top:724.70px;font-size:13.8px;line-height:19px;color:#2b2b2b;letter-spacing:-0.034px;">Published</span>
<div style="left:752px;top:722px;width:21.5px;height:21.5px;border:1px solid #cfcfcf;border-radius:50%;background:#fff;"></div>
<span class="t" style="left:784.00px;top:724.70px;font-size:13.8px;line-height:19px;color:#2b2b2b;letter-spacing:0.014px;">Archived</span>
<span class="t" style="left:51.00px;top:764.90px;font-size:13.8px;line-height:19px;color:#2b2b2b;letter-spacing:-0.030px;">Start - End Publishing:</span>
<div style="left:211px;top:756px;width:794px;height:36px;border:1px solid #d9d9d9;border-radius:4px;background:#fff;"></div>
<svg style="left:571.5px;top:769.5px;" width="16" height="10" viewBox="0 0 14 10" preserveAspectRatio="none"><path d="M.500 5h12M9 1.500L12.800 5 9 8.500" stroke="#8a8a8a" stroke-width="1.300" fill="none"/></svg>
<svg style="left:980px;top:765px;" width="16" height="17" viewBox="0 0 16 16" preserveAspectRatio="none"><rect x="1.700" y="2.500" width="12.600" height="12" rx="1.500" fill="none" stroke="#222" stroke-width="1.600"/><rect x="1.700" y="2.500" width="12.600" height="3.800" fill="#222"/><path d="M4.700 .700v2.500M11.300 .700v2.500" stroke="#222" stroke-width="1.600"/></svg>
<span class="t" style="left:51.00px;top:822.50px;font-size:19.8px;line-height:28px;color:#333;letter-spacing:0.552px;">About</span>
<div style="left:51px;top:855px;width:954px;height:1px;background:#dedede;"></div>
<span class="t" style="left:51.00px;top:884.40px;font-size:13.8px;line-height:19px;color:#2b2b2b;letter-spacing:-0.003px;">Created At:</span>
<div style="left:211px;top:875px;width:302px;height:36px;border:1px dashed #d4d4d4;border-radius:4px;background:#fff;"></div>
<span class="t" style="left:543.40px;top:884.40px;font-size:13.8px;line-height:19px;color:#2b2b2b;letter-spacing:-0.260px;">Created By:</span>
<div style="left:703px;top:875px;width:302px;height:36px;border:1px dashed #d4d4d4;border-radius:4px;background:#fff;"></div>
<span class="t" style="left:51.00px;top:930.20px;font-size:13.8px;line-height:19px;color:#2b2b2b;letter-spacing:0.152px;">Last Modified At:</span>
<div style="left:211px;top:921px;width:302px;height:36px;border:1px dashed #d4d4d4;border-radius:4px;background:#fff;"></div>
<span class="t" style="left:543.40px;top:930.20px;font-size:13.8px;line-height:19px;color:#2b2b2b;letter-spacing:-0.014px;">Last Modified By:</span>
<div style="left:703px;top:921px;width:302px;height:36px;border:1px dashed #d4d4d4;border-radius:4px;background:#fff;"></div>
<span class="t" style="left:51.00px;top:975.70px;font-size:13.8px;line-height:19px;color:#2b2b2b;letter-spacing:0.002px;">Object Type Name:</span>
<div style="left:211px;top:967px;width:794px;height:36px;border:1px dashed #d4d4d4;border-radius:4px;background:#fff;"></div>
<span class="t" style="left:51.00px;top:1021.50px;font-size:13.8px;line-height:19px;color:#2b2b2b;letter-spacing:0.149px;">Unique Identifier:</span>
<div style="left:211px;top:1012.5px;width:794px;height:36px;border:1px dashed #d4d4d4;border-radius:4px;background:#fff;"></div>
<span class="t" style="left:51.00px;top:1068.00px;font-size:13.8px;line-height:19px;color:#2b2b2b;letter-spacing:0.094px;">Object Id:</span>
<div style="left:211px;top:1059px;width:794px;height:36px;border:1px dashed #d4d4d4;border-radius:4px;background:#fff;"></div>
<span class="t" style="left:221.40px;top:1068.00px;font-size:13.8px;line-height:19px;color:#2b2b2b;letter-spacing:0.000px;">0</span>
<div style="left:951px;top:1166px;width:55px;height:36px;border:1px solid #d9d9d9;border-radius:4px;background:#fff;"></div>
<span class="t" style="left:965.00px;top:1175.20px;font-size:13px;line-height:18px;color:#2b2b2b;letter-spacing:-0.307px;">Save</span>
<div style="left:1066px;top:292px;width:340px;height:940px;background:#fff;border:1px solid #c2c2c2;border-top:none;border-bottom:none;"></div>
<div style="left:1067px;top:292px;width:338px;height:25px;background:#fafafa;"></div>
<div style="left:1092px;top:292px;width:1px;height:910px;background:#e3e3e3;"></div>
<div style="left:1067px;top:317px;width:338px;height:1px;background:#e3e3e3;"></div>
<span class="t" style="left:1098.00px;top:297.00px;font-size:11.25px;line-height:16px;color:#1b1b1b;letter-spacing:-0.205px;">Label</span>
<div style="left:1093px;top:317.5px;width:312px;height:26px;background:#e4e4e4;"></div>
<svg style="left:1076px;top:324.5px;" width="8" height="11" viewBox="0 0 8 12" preserveAspectRatio="none"><path d="M1 1l6 5-6 5Z" stroke="#777" stroke-width="1" fill="none"/></svg>
<div style="left:1117px;top:343.0px;width:288px;height:1px;background:#e0e0e0;"></div>
<div style="left:1093px;top:343.0px;width:2px;height:1px;background:#e0e0e0;"></div>
<svg style="left:1099px;top:327.5px;" width="11" height="7" viewBox="0 0 12 8" preserveAspectRatio="none"><path d="M1.500 1.500L6 6l4.500-4.500" stroke="#222" stroke-width="1.200" fill="none"/></svg>
<svg style="left:1122.7px;top:325.04999999999995px;" width="15" height="12.7" viewBox="0 0 15 12.700" preserveAspectRatio="none"><rect x=".700" y=".700" width="13.600" height="11.300" rx="1.900" fill="none" stroke="#000" stroke-width="1.400"/><path d="M.700 4H14.300M4.300 .700V4" stroke="#000" stroke-width="1.200" fill="none"/></svg>
<span class="t" style="left:1145.00px;top:322.00px;font-size:11.5px;line-height:16px;color:#1b1b1b;letter-spacing:-0.200px;">Page Details</span>
<div style="left:1141px;top:369.0px;width:264px;height:1px;background:#e0e0e0;"></div>
<div style="left:1093px;top:369.0px;width:2px;height:1px;background:#e0e0e0;"></div>
<svg style="left:1123px;top:353.5px;" width="11" height="7" viewBox="0 0 12 8" preserveAspectRatio="none"><path d="M1.500 1.500L6 6l4.500-4.500" stroke="#222" stroke-width="1.200" fill="none"/></svg>
<svg style="left:1147.05px;top:352.29999999999995px;" width="14.5" height="10.2" viewBox="0 0 14.500 10.200" preserveAspectRatio="none"><rect x=".800" y=".800" width="12.900" height="8.600" rx="1.500" fill="none" stroke="#000" stroke-width="1.600"/></svg>
<span class="t" style="left:1169.00px;top:348.00px;font-size:11.5px;line-height:16px;color:#1b1b1b;letter-spacing:0.007px;">Template and Website</span>
<div style="left:1165px;top:395.0px;width:240px;height:1px;background:#e0e0e0;"></div>
<div style="left:1093px;top:395.0px;width:2px;height:1px;background:#e0e0e0;"></div>
<svg style="left:1171.2px;top:377.54999999999995px;" width="14.4" height="11.7" viewBox="0 0 14.400 11.700" preserveAspectRatio="none"><rect x="-4.300" y="-2.600" width="8.600" height="5.200" rx="2.600" fill="none" stroke="#000" stroke-width="1.7" transform="translate(4.900 7.300) rotate(-31)"/><rect x="-4.300" y="-2.600" width="8.600" height="5.200" rx="2.600" fill="none" stroke="#000" stroke-width="1.7" transform="translate(9.500 4.400) rotate(-31)"/></svg>
<span class="t" style="left:1193.00px;top:374.00px;font-size:11.5px;line-height:16px;color:#1b1b1b;letter-spacing:-0.157px;">Template</span>
<div style="left:1141px;top:421.0px;width:264px;height:1px;background:#e0e0e0;"></div>
<div style="left:1093px;top:421.0px;width:2px;height:1px;background:#e0e0e0;"></div>
<svg style="left:1170.9px;top:403.9px;" width="15" height="11" viewBox="0 0 30 24.600" preserveAspectRatio="none"><path d="M3.200 16.300L15 20 26.800 16.300V21.700L15 24.600 3.200 21.700Z" fill="#000"/><path d="M7.600 17.300L15 11.800 22.400 17.300 15 20.200Z" fill="#000"/><path d="M15 11.500L7.800 8 .200 13.500 7.600 17.700Z" fill="#000" stroke="#fff" stroke-width=".700"/><path d="M15 11.500L22.200 8 29.800 13.500 22.400 17.700Z" fill="#000" stroke="#fff" stroke-width=".700"/><path d="M8.300 16.400L12.600 19.300 15 14 17.400 19.300 21.700 16.400" fill="none" stroke="#fff" stroke-width="1.300"/><path d="M11.700 9.300C8.800 7.300 9.600 2.200 13 2.200 16 2.200 16.500 5 15.200 7" fill="none" stroke="#000" stroke-width="2.700"/><path d="M16.400 8.200C16.800 3.600 20.800 .800 25.600 .800 25.200 5.200 22.600 8.800 16.400 8.200Z" fill="#000"/></svg>
<span class="t" style="left:1193.00px;top:400.00px;font-size:11.5px;line-height:16px;color:#1b1b1b;letter-spacing:0.024px;">Website</span>
<div style="left:1141px;top:447.0px;width:264px;height:1px;background:#e0e0e0;"></div>
<div style="left:1093px;top:447.0px;width:2px;height:1px;background:#e0e0e0;"></div>
<svg style="left:1123px;top:431.5px;" width="11" height="7" viewBox="0 0 12 8" preserveAspectRatio="none"><path d="M1.500 1.500L6 6l4.500-4.500" stroke="#222" stroke-width="1.200" fill="none"/></svg>
<svg style="left:1147.05px;top:430.29999999999995px;" width="14.5" height="10.2" viewBox="0 0 14.500 10.200" preserveAspectRatio="none"><rect x=".800" y=".800" width="12.900" height="8.600" rx="1.500" fill="none" stroke="#000" stroke-width="1.600"/></svg>
<span class="t" style="left:1169.00px;top:426.00px;font-size:11.5px;line-height:16px;color:#1b1b1b;letter-spacing:0.259px;">Menu Options</span>
<div style="left:1165px;top:473.0px;width:240px;height:1px;background:#e0e0e0;"></div>
<div style="left:1093px;top:473.0px;width:2px;height:1px;background:#e0e0e0;"></div>
<svg style="left:1172.0500000000002px;top:456.75px;" width="12.7" height="9.3" viewBox="0 0 12.700 9.300" preserveAspectRatio="none"><path d="M.800 4.900L4.500 8.300 11.900 .800" stroke="#000" stroke-width="2.100" fill="none"/></svg>
<span class="t" style="left:1193.00px;top:452.00px;font-size:11.5px;line-height:16px;color:#1b1b1b;letter-spacing:-0.035px;">Include in Site Menu(s)</span>
<div style="left:1165px;top:499.0px;width:240px;height:1px;background:#e0e0e0;"></div>
<div style="left:1093px;top:499.0px;width:2px;height:1px;background:#e0e0e0;"></div>
<svg style="left:1172.0500000000002px;top:481.04999999999995px;" width="12.7" height="12.5" viewBox="0 0 12.700 12.500" preserveAspectRatio="none"><path d="M6.100 1L2.300 11.600" stroke="#000" stroke-width="1.300" fill="none"/><path d="M6.300 .400L10.300 11.600" stroke="#000" stroke-width="2.200" fill="none"/><path d="M3.700 7.900H9.100" stroke="#000" stroke-width="1.200"/><path d="M.200 11.800H4.700M7.700 11.800H12.500" stroke="#000" stroke-width="1.400"/></svg>
<span class="t" style="left:1193.00px;top:478.00px;font-size:11.5px;line-height:16px;color:#1b1b1b;letter-spacing:-0.092px;">Alternate Name</span>
<div style="left:1141px;top:525.0px;width:264px;height:1px;background:#e0e0e0;"></div>
<div style="left:1093px;top:525.0px;width:2px;height:1px;background:#e0e0e0;"></div>
<svg style="left:1172.0500000000002px;top:507.04999999999995px;" width="12.7" height="12.5" viewBox="0 0 12.700 12.500" preserveAspectRatio="none"><path d="M6.100 1L2.300 11.600" stroke="#000" stroke-width="1.300" fill="none"/><path d="M6.300 .400L10.300 11.600" stroke="#000" stroke-width="2.200" fill="none"/><path d="M3.700 7.900H9.100" stroke="#000" stroke-width="1.200"/><path d="M.200 11.800H4.700M7.700 11.800H12.500" stroke="#000" stroke-width="1.400"/></svg>
<span class="t" style="left:1193.00px;top:504.00px;font-size:11.5px;line-height:16px;color:#1b1b1b;letter-spacing:-0.010px;">Logged In Menu Name</span>
<div style="left:1141px;top:551.0px;width:264px;height:1px;background:#e0e0e0;"></div>
<div style="left:1093px;top:551.0px;width:2px;height:1px;background:#e0e0e0;"></div>
<svg style="left:1123px;top:535.5px;" width="11" height="7" viewBox="0 0 12 8" preserveAspectRatio="none"><path d="M1.500 1.500L6 6l4.500-4.500" stroke="#222" stroke-width="1.200" fill="none"/></svg>
<svg style="left:1147.05px;top:534.3px;" width="14.5" height="10.2" viewBox="0 0 14.500 10.200" preserveAspectRatio="none"><rect x=".800" y=".800" width="12.900" height="8.600" rx="1.500" fill="none" stroke="#000" stroke-width="1.600"/></svg>
<span class="t" style="left:1169.00px;top:530.00px;font-size:11.5px;line-height:16px;color:#1b1b1b;letter-spacing:-0.053px;">Passed Object Options</span>
<div style="left:1165px;top:577.0px;width:240px;height:1px;background:#e0e0e0;"></div>
<div style="left:1093px;top:577.0px;width:2px;height:1px;background:#e0e0e0;"></div>
<svg style="left:1175.9px;top:558.8px;" width="5" height="13.2" viewBox="0 0 5 13.200" preserveAspectRatio="none"><circle cx="2.500" cy="2.200" r="2.150" fill="#000"/><circle cx="2.500" cy="6.600" r="2.150" fill="#000"/><circle cx="2.500" cy="11" r="2.150" fill="#000"/></svg>
<span class="t" style="left:1193.00px;top:556.00px;font-size:11.75px;line-height:16px;color:#1b1b1b;letter-spacing:0.331px;">Option</span>
<div style="left:1141px;top:603.0px;width:264px;height:1px;background:#e0e0e0;"></div>
<div style="left:1093px;top:603.0px;width:2px;height:1px;background:#e0e0e0;"></div>
<svg style="left:1175.9px;top:584.8px;" width="5" height="13.2" viewBox="0 0 5 13.200" preserveAspectRatio="none"><circle cx="2.500" cy="2.200" r="2.150" fill="#000"/><circle cx="2.500" cy="6.600" r="2.150" fill="#000"/><circle cx="2.500" cy="11" r="2.150" fill="#000"/></svg>
<span class="t" style="left:1193.00px;top:582.00px;font-size:11.5px;line-height:16px;color:#1b1b1b;letter-spacing:-0.143px;">For ObjectType</span>
<div style="left:1141px;top:629.0px;width:264px;height:1px;background:#e0e0e0;"></div>
<div style="left:1093px;top:629.0px;width:2px;height:1px;background:#e0e0e0;"></div>
<svg style="left:1123px;top:613.5px;" width="11" height="7" viewBox="0 0 12 8" preserveAspectRatio="none"><path d="M1.500 1.500L6 6l4.500-4.500" stroke="#222" stroke-width="1.200" fill="none"/></svg>
<svg style="left:1147.05px;top:612.3px;" width="14.5" height="10.2" viewBox="0 0 14.500 10.200" preserveAspectRatio="none"><rect x=".800" y=".800" width="12.900" height="8.600" rx="1.500" fill="none" stroke="#000" stroke-width="1.600"/></svg>
<span class="t" style="left:1169.00px;top:608.00px;font-size:11.5px;line-height:16px;color:#1b1b1b;letter-spacing:-0.160px;">Meta Tags</span>
<div style="left:1165px;top:655.0px;width:240px;height:1px;background:#e0e0e0;"></div>
<div style="left:1093px;top:655.0px;width:2px;height:1px;background:#e0e0e0;"></div>
<svg style="left:1171.15px;top:638.3px;" width="14.5" height="10.2" viewBox="0 0 14.500 10.200" preserveAspectRatio="none"><rect x=".800" y=".800" width="12.900" height="8.600" rx="1.500" fill="none" stroke="#000" stroke-width="1.600"/></svg>
<span class="t" style="left:1193.00px;top:634.00px;font-size:11.5px;line-height:16px;color:#1b1b1b;letter-spacing:0.076px;">Meta Description</span>
<div style="left:1141px;top:681.0px;width:264px;height:1px;background:#e0e0e0;"></div>
<div style="left:1093px;top:681.0px;width:2px;height:1px;background:#e0e0e0;"></div>
<svg style="left:1171.15px;top:664.3px;" width="14.5" height="10.2" viewBox="0 0 14.500 10.200" preserveAspectRatio="none"><rect x=".800" y=".800" width="12.900" height="8.600" rx="1.500" fill="none" stroke="#000" stroke-width="1.600"/></svg>
<span class="t" style="left:1193.00px;top:660.00px;font-size:11.5px;line-height:16px;color:#1b1b1b;letter-spacing:-0.150px;">Meta Keywords</span>
<div style="left:1141px;top:707.0px;width:264px;height:1px;background:#e0e0e0;"></div>
<div style="left:1093px;top:707.0px;width:2px;height:1px;background:#e0e0e0;"></div>
<svg style="left:1123px;top:691.5px;" width="11" height="7" viewBox="0 0 12 8" preserveAspectRatio="none"><path d="M1.500 1.500L6 6l4.500-4.500" stroke="#222" stroke-width="1.200" fill="none"/></svg>
<svg style="left:1147.05px;top:690.3px;" width="14.5" height="10.2" viewBox="0 0 14.500 10.200" preserveAspectRatio="none"><rect x=".800" y=".800" width="12.900" height="8.600" rx="1.500" fill="none" stroke="#000" stroke-width="1.600"/></svg>
<span class="t" style="left:1169.00px;top:686.00px;font-size:11.5px;line-height:16px;color:#1b1b1b;letter-spacing:-0.170px;">XFlow</span>
<div style="left:1165px;top:733.0px;width:240px;height:1px;background:#e0e0e0;"></div>
<div style="left:1093px;top:733.0px;width:2px;height:1px;background:#e0e0e0;"></div>
<svg style="left:1171.9px;top:714.9px;" width="13" height="13" viewBox="0 0 13 13" preserveAspectRatio="none"><path d="M.300 1.400A1.100 1.100 0 0 1 1.400 .300H6a1.400 1.400 0 0 1 1 .400l5.300 5.300a1.400 1.400 0 0 1 0 2l-4.400 4.400a1.400 1.400 0 0 1-2 0L.700 7.100a1.400 1.400 0 0 1-.400-1Z" fill="#000"/><circle cx="3.300" cy="3.300" r="1.050" fill="#fff"/></svg>
<span class="t" style="left:1193.00px;top:712.00px;font-size:11.25px;line-height:16px;color:#1b1b1b;letter-spacing:-0.205px;">Label</span>
<div style="left:1165px;top:759.0px;width:240px;height:1px;background:#e0e0e0;"></div>
<div style="left:1093px;top:759.0px;width:2px;height:1px;background:#e0e0e0;"></div>
<svg style="left:1171.0px;top:741.75px;" width="14.8" height="11.3" viewBox="0 0 14.800 11.300" preserveAspectRatio="none"><rect x="5.300" y="0" width="4.200" height="3.600" rx=".700" fill="#000"/><rect x="0" y="7.700" width="4" height="3.600" rx=".700" fill="#000"/><rect x="5.400" y="7.700" width="4" height="3.600" rx=".700" fill="#000"/><rect x="10.800" y="7.700" width="4" height="3.600" rx=".700" fill="#000"/><path d="M7.400 3.400V8M2 8V5.700H12.800V8" stroke="#000" stroke-width="1.300" fill="none"/></svg>
<span class="t" style="left:1193.00px;top:738.00px;font-size:11.5px;line-height:16px;color:#1b1b1b;letter-spacing:-0.159px;">Fire XFlow On Load</span>
<div style="left:1165px;top:785.0px;width:240px;height:1px;background:#e0e0e0;"></div>
<div style="left:1093px;top:785.0px;width:2px;height:1px;background:#e0e0e0;"></div>
<svg style="left:1171.9px;top:766.9px;" width="13" height="13" viewBox="0 0 13 13" preserveAspectRatio="none"><path d="M.300 1.400A1.100 1.100 0 0 1 1.400 .300H6a1.400 1.400 0 0 1 1 .400l5.300 5.300a1.400 1.400 0 0 1 0 2l-4.400 4.400a1.400 1.400 0 0 1-2 0L.700 7.100a1.400 1.400 0 0 1-.400-1Z" fill="#000"/><circle cx="3.300" cy="3.300" r="1.050" fill="#fff"/></svg>
<span class="t" style="left:1193.00px;top:764.00px;font-size:11.25px;line-height:16px;color:#1b1b1b;letter-spacing:-0.205px;">Label</span>
<div style="left:1117px;top:811.0px;width:288px;height:1px;background:#e0e0e0;"></div>
<div style="left:1093px;top:811.0px;width:2px;height:1px;background:#e0e0e0;"></div>
<svg style="left:1171.0px;top:793.75px;" width="14.8" height="11.3" viewBox="0 0 14.800 11.300" preserveAspectRatio="none"><rect x="5.300" y="0" width="4.200" height="3.600" rx=".700" fill="#000"/><rect x="0" y="7.700" width="4" height="3.600" rx=".700" fill="#000"/><rect x="5.400" y="7.700" width="4" height="3.600" rx=".700" fill="#000"/><rect x="10.800" y="7.700" width="4" height="3.600" rx=".700" fill="#000"/><path d="M7.400 3.400V8M2 8V5.700H12.800V8" stroke="#000" stroke-width="1.300" fill="none"/></svg>
<span class="t" style="left:1193.00px;top:790.00px;font-size:11.5px;line-height:16px;color:#1b1b1b;letter-spacing:-0.099px;">Fire XFlow After Load</span>
<div style="left:1117px;top:837.0px;width:288px;height:1px;background:#e0e0e0;"></div>
<div style="left:1093px;top:837.0px;width:2px;height:1px;background:#e0e0e0;"></div>
<svg style="left:1099px;top:821.5px;" width="11" height="7" viewBox="0 0 12 8" preserveAspectRatio="none"><path d="M1.500 1.500L6 6l4.500-4.500" stroke="#222" stroke-width="1.200" fill="none"/></svg>
<svg style="left:1122.7px;top:819.05px;" width="15" height="12.7" viewBox="0 0 15 12.700" preserveAspectRatio="none"><rect x=".700" y=".700" width="13.600" height="11.300" rx="1.900" fill="none" stroke="#000" stroke-width="1.400"/><path d="M.700 4H14.300M4.300 .700V4" stroke="#000" stroke-width="1.200" fill="none"/></svg>
<span class="t" style="left:1145.00px;top:816.00px;font-size:11.5px;line-height:16px;color:#1b1b1b;letter-spacing:0.053px;">Google</span>
<div style="left:1141px;top:863.0px;width:264px;height:1px;background:#e0e0e0;"></div>
<div style="left:1093px;top:863.0px;width:2px;height:1px;background:#e0e0e0;"></div>
<svg style="left:1123px;top:847.5px;" width="11" height="7" viewBox="0 0 12 8" preserveAspectRatio="none"><path d="M1.500 1.500L6 6l4.500-4.500" stroke="#222" stroke-width="1.200" fill="none"/></svg>
<svg style="left:1147.05px;top:846.3px;" width="14.5" height="10.2" viewBox="0 0 14.500 10.200" preserveAspectRatio="none"><rect x=".800" y=".800" width="12.900" height="8.600" rx="1.500" fill="none" stroke="#000" stroke-width="1.600"/></svg>
<span class="t" style="left:1169.00px;top:842.00px;font-size:11.5px;line-height:16px;color:#1b1b1b;letter-spacing:-0.004px;">Google Analytics</span>
<div style="left:1141px;top:889.0px;width:264px;height:1px;background:#e0e0e0;"></div>
<div style="left:1093px;top:889.0px;width:2px;height:1px;background:#e0e0e0;"></div>
<svg style="left:1172.0500000000002px;top:872.75px;" width="12.7" height="9.3" viewBox="0 0 12.700 9.300" preserveAspectRatio="none"><path d="M.800 4.900L4.500 8.300 11.900 .800" stroke="#000" stroke-width="2.100" fill="none"/></svg>
<span class="t" style="left:1193.00px;top:868.00px;font-size:11.5px;line-height:16px;color:#1b1b1b;letter-spacing:0.030px;">Include in Analytics</span>
<div style="left:1141px;top:915.0px;width:264px;height:1px;background:#e0e0e0;"></div>
<div style="left:1093px;top:915.0px;width:2px;height:1px;background:#e0e0e0;"></div>
<svg style="left:1123px;top:899.5px;" width="11" height="7" viewBox="0 0 12 8" preserveAspectRatio="none"><path d="M1.500 1.500L6 6l4.500-4.500" stroke="#222" stroke-width="1.200" fill="none"/></svg>
<svg style="left:1147.05px;top:898.3px;" width="14.5" height="10.2" viewBox="0 0 14.500 10.200" preserveAspectRatio="none"><rect x=".800" y=".800" width="12.900" height="8.600" rx="1.500" fill="none" stroke="#000" stroke-width="1.600"/></svg>
<span class="t" style="left:1169.00px;top:894.00px;font-size:11.5px;line-height:16px;color:#1b1b1b;letter-spacing:-0.069px;">Google Sitemap</span>
<div style="left:1165px;top:941.0px;width:240px;height:1px;background:#e0e0e0;"></div>
<div style="left:1093px;top:941.0px;width:2px;height:1px;background:#e0e0e0;"></div>
<svg style="left:1172.0500000000002px;top:924.75px;" width="12.7" height="9.3" viewBox="0 0 12.700 9.300" preserveAspectRatio="none"><path d="M.800 4.900L4.500 8.300 11.900 .800" stroke="#000" stroke-width="2.100" fill="none"/></svg>
<span class="t" style="left:1193.00px;top:920.00px;font-size:11.5px;line-height:16px;color:#1b1b1b;letter-spacing:-0.006px;">Include in Sitemap</span>
<div style="left:1165px;top:967.0px;width:240px;height:1px;background:#e0e0e0;"></div>
<div style="left:1093px;top:967.0px;width:2px;height:1px;background:#e0e0e0;"></div>
<svg style="left:1175.9px;top:948.8px;" width="5" height="13.2" viewBox="0 0 5 13.200" preserveAspectRatio="none"><circle cx="2.500" cy="2.200" r="2.150" fill="#000"/><circle cx="2.500" cy="6.600" r="2.150" fill="#000"/><circle cx="2.500" cy="11" r="2.150" fill="#000"/></svg>
<span class="t" style="left:1193.00px;top:946.00px;font-size:11.5px;line-height:16px;color:#1b1b1b;letter-spacing:-0.038px;">Update Frequency</span>
<div style="left:1141px;top:993.0px;width:264px;height:1px;background:#e0e0e0;"></div>
<div style="left:1093px;top:993.0px;width:2px;height:1px;background:#e0e0e0;"></div>
<svg style="left:1175.9px;top:974.8px;" width="5" height="13.2" viewBox="0 0 5 13.200" preserveAspectRatio="none"><circle cx="2.500" cy="2.200" r="2.150" fill="#000"/><circle cx="2.500" cy="6.600" r="2.150" fill="#000"/><circle cx="2.500" cy="11" r="2.150" fill="#000"/></svg>
<span class="t" style="left:1193.00px;top:972.00px;font-size:11.5px;line-height:16px;color:#1b1b1b;letter-spacing:-0.156px;">Page Priority</span>
<div style="left:1141px;top:1019.0px;width:264px;height:1px;background:#e0e0e0;"></div>
<div style="left:1093px;top:1019.0px;width:2px;height:1px;background:#e0e0e0;"></div>
<svg style="left:1123px;top:1003.5px;" width="11" height="7" viewBox="0 0 12 8" preserveAspectRatio="none"><path d="M1.500 1.500L6 6l4.500-4.500" stroke="#222" stroke-width="1.200" fill="none"/></svg>
<svg style="left:1147.05px;top:1002.3px;" width="14.5" height="10.2" viewBox="0 0 14.500 10.200" preserveAspectRatio="none"><rect x=".800" y=".800" width="12.900" height="8.600" rx="1.500" fill="none" stroke="#000" stroke-width="1.600"/></svg>
<span class="t" style="left:1169.00px;top:998.00px;font-size:11.5px;line-height:16px;color:#1b1b1b;letter-spacing:0.051px;">Bot Behaviour</span>
<div style="left:1117px;top:1045.0px;width:288px;height:1px;background:#e0e0e0;"></div>
<div style="left:1093px;top:1045.0px;width:2px;height:1px;background:#e0e0e0;"></div>
<svg style="left:1171.9px;top:1028.15px;" width="13" height="10.5" viewBox="0 0 13 10.500" preserveAspectRatio="none"><path d="M.800 4.600L4.300 7.800 11.700 .800" stroke="#000" stroke-width="2" fill="none"/><path d="M4.800 8.200L6.700 9.900 12.600 4" stroke="#1a1af0" stroke-width="1.100" fill="none"/></svg>
<span class="t" style="left:1193.00px;top:1024.00px;font-size:11.5px;line-height:16px;color:#1b1b1b;letter-spacing:-0.061px;">CheckboxGroup</span>
<div style="left:1117px;top:1071.0px;width:288px;height:1px;background:#e0e0e0;"></div>
<div style="left:1093px;top:1071.0px;width:2px;height:1px;background:#e0e0e0;"></div>
<svg style="left:1122.9px;top:1052.95px;" width="14.6" height="12.9" viewBox="0 0 14.600 12.900" preserveAspectRatio="none"><rect x=".750" y=".750" width="13.100" height="11.400" rx="1.800" fill="none" stroke="#000" stroke-width="1.500"/><path d="M.750 4.300H13.850M.750 8.100H13.850M7.300 4.300V12.100" stroke="#000" stroke-width="1.400" fill="none"/></svg>
<span class="t" style="left:1145.00px;top:1050.00px;font-size:10.5px;line-height:16px;color:#1b1b1b;letter-spacing:-0.539px;">URLs</span>
<div style="left:1117px;top:1097.0px;width:288px;height:1px;background:#e0e0e0;"></div>
<div style="left:1093px;top:1097.0px;width:2px;height:1px;background:#e0e0e0;"></div>
<svg style="left:1099px;top:1081.5px;" width="11" height="7" viewBox="0 0 12 8" preserveAspectRatio="none"><path d="M1.500 1.500L6 6l4.500-4.500" stroke="#222" stroke-width="1.200" fill="none"/></svg>
<svg style="left:1122.7px;top:1079.0500000000002px;" width="15" height="12.7" viewBox="0 0 15 12.700" preserveAspectRatio="none"><rect x=".700" y=".700" width="13.600" height="11.300" rx="1.900" fill="none" stroke="#000" stroke-width="1.400"/><path d="M.700 4H14.300M4.300 .700V4" stroke="#000" stroke-width="1.200" fill="none"/></svg>
<span class="t" style="left:1145.00px;top:1076.00px;font-size:11.5px;line-height:16px;color:#1b1b1b;letter-spacing:-0.074px;">Object Image</span>
<div style="left:1141px;top:1123.0px;width:264px;height:1px;background:#e0e0e0;"></div>
<div style="left:1093px;top:1123.0px;width:2px;height:1px;background:#e0e0e0;"></div>
<svg style="left:1123px;top:1107.5px;" width="11" height="7" viewBox="0 0 12 8" preserveAspectRatio="none"><path d="M1.500 1.500L6 6l4.500-4.500" stroke="#222" stroke-width="1.200" fill="none"/></svg>
<svg style="left:1147.05px;top:1106.3000000000002px;" width="14.5" height="10.2" viewBox="0 0 14.500 10.200" preserveAspectRatio="none"><rect x=".800" y=".800" width="12.900" height="8.600" rx="1.500" fill="none" stroke="#000" stroke-width="1.600"/></svg>
<span class="t" style="left:1169.00px;top:1102.00px;font-size:11.5px;line-height:16px;color:#1b1b1b;letter-spacing:-0.009px;">FieldSetContainer</span>
<div style="left:1117px;top:1149.0px;width:288px;height:1px;background:#e0e0e0;"></div>
<div style="left:1093px;top:1149.0px;width:2px;height:1px;background:#e0e0e0;"></div>
<svg style="left:1171.15px;top:1131.25px;" width="14.5" height="12.3" viewBox="0 0 14.500 12.300" preserveAspectRatio="none"><rect x="0" y="0" width="14.500" height="12.300" rx="2" fill="#000"/><circle cx="4" cy="3.700" r="1.300" fill="#fff"/><path d="M2 10.300L4.800 7l1.700 1.800 2.800-4 3.300 5.500Z" fill="#fff"/></svg>
<span class="t" style="left:1193.00px;top:1128.00px;font-size:11.5px;line-height:16px;color:#1b1b1b;letter-spacing:-0.158px;">ImageField</span>
<div style="left:1117px;top:1175.0px;width:288px;height:1px;background:#e0e0e0;"></div>
<div style="left:1093px;top:1175.0px;width:2px;height:1px;background:#e0e0e0;"></div>
<svg style="left:1123.0px;top:1157.5500000000002px;" width="14.4" height="11.7" viewBox="0 0 14.400 11.700" preserveAspectRatio="none"><rect x="-4.300" y="-2.600" width="8.600" height="5.200" rx="2.600" fill="none" stroke="#000" stroke-width="1.15" transform="translate(4.900 7.300) rotate(-31)"/><rect x="-4.300" y="-2.600" width="8.600" height="5.200" rx="2.600" fill="none" stroke="#000" stroke-width="1.15" transform="translate(9.500 4.400) rotate(-31)"/></svg>
<span class="t" style="left:1145.00px;top:1154.00px;font-size:11.5px;line-height:16px;color:#1b1b1b;letter-spacing:-0.044px;">AssociationsBrowser</span>
<div style="left:1117px;top:1201.0px;width:288px;height:1px;background:#e0e0e0;"></div>
<div style="left:1093px;top:1201.0px;width:2px;height:1px;background:#e0e0e0;"></div>
<svg style="left:1122.95px;top:1182.2px;" width="14.5" height="14.4" viewBox="0 0 18 18" preserveAspectRatio="none"><circle cx="11.900" cy="6.100" r="5.275" fill="none" stroke="#000" stroke-width="1.25"/><circle cx="13.300" cy="4.700" r="1.0" fill="#000"/><path d="M7.400 7.700L0.825 14.100V17.175H4.125V15.700H5.925V13.900H7.900L10 11.600" stroke="#000" stroke-width="1.25" fill="none" stroke-linejoin="round"/></svg>
<span class="t" style="left:1145.00px;top:1180.00px;font-size:11.5px;line-height:16px;color:#1b1b1b;letter-spacing:-0.284px;">Permissions</span>
<div style="left:1756px;top:292px;width:1px;height:940px;background:#d6d6d6;"></div>
<span class="t" style="left:1426.00px;top:302.00px;font-size:11.5px;line-height:16px;color:#1b1b1b;letter-spacing:-0.079px;font-weight:bold;">Toolbox</span>
<svg style="left:1733.5px;top:303px;" width="7" height="13" viewBox="0 0 8 12" preserveAspectRatio="none"><path d="M6.500 1.500L2 6l4.500 4.500" stroke="#222" stroke-width="1.200" fill="none"/></svg>
<div style="left:1425px;top:325px;width:320px;height:21.5px;background:#fff;border:1px solid #dcdcdc;border-bottom:1px solid #8a8a8a;border-radius:4px;"></div>
<span class="t" style="left:1429.50px;top:328.00px;font-size:11.5px;line-height:16px;color:#a8a8a8;letter-spacing:-0.087px;">Enter text to search...</span>
<svg style="left:1726.5px;top:329.5px;" width="13" height="13" viewBox="0 0 14 14" preserveAspectRatio="none"><circle cx="8.300" cy="5.700" r="4.600" fill="none" stroke="#222" stroke-width="1.100"/><path d="M5 9L.800 13.200" stroke="#222" stroke-width="1.200"/></svg>
<div style="left:1431.5px;top:362px;width:307px;height:17px;background:#fff;border-radius:4px;box-shadow:0 0 2px rgba(0,0,0,.28);"></div>
<svg style="left:1580.5px;top:367px;" width="8" height="7" viewBox="0 0 8 7" preserveAspectRatio="none"><path d="M0 7L4 0l4 7Z" fill="#b5b5b5"/></svg>
<svg style="left:1436px;top:385.8px;" width="29" height="30.4" viewBox="0 0 24 24" preserveAspectRatio="none"><rect x="1" y="3" width="22" height="19" rx="3.200" fill="#000"/><rect x="7.600" y="5.800" width="12" height="2.300" fill="#fff"/><rect x="4" y="5.800" width="2.300" height="2.300" fill="#fff"/></svg>
<span class="t" style="left:1469.00px;top:397.00px;font-size:11.25px;line-height:16px;color:#1b1b1b;letter-spacing:-0.218px;font-weight:bold;">Tab Types</span>
<svg style="left:1724.2px;top:401px;" width="11.5" height="7" viewBox="0 0 12 8" preserveAspectRatio="none"><path d="M1.500 6.500L6 2l4.500 4.500" stroke="#222" stroke-width="1.200" fill="none"/></svg>
<svg style="left:1439.05px;top:429.2px;" width="16.3" height="18" viewBox="0 0 16.300 18" preserveAspectRatio="none"><rect x=".850" y="2.600" width="14.600" height="14.500" rx="2" fill="none" stroke="#000" stroke-width="1.700"/><path d="M.850 6.700H15.450" stroke="#000" stroke-width="1.600"/><path d="M4.600 0V3.400M11.700 0V3.400" stroke="#000" stroke-width="1.900"/><rect x="3.900" y="8.900" width="8.500" height="5.800" fill="#000"/><path d="M6.750 8.900v5.800M9.550 8.900v5.800M3.900 11.800h8.500" stroke="#f3f3f3" stroke-width=".750"/></svg>
<span class="t" style="left:1465.40px;top:430.00px;font-size:11.5px;line-height:16px;color:#1b1b1b;letter-spacing:-0.074px;">Agenda</span>
<svg style="left:1438.3px;top:458.95px;" width="17.8" height="14.5" viewBox="0 0 14.400 11.700" preserveAspectRatio="none"><rect x="-4.300" y="-2.600" width="8.600" height="5.200" rx="2.600" fill="none" stroke="#000" stroke-width="1.7" transform="translate(4.900 7.300) rotate(-31)"/><rect x="-4.300" y="-2.600" width="8.600" height="5.200" rx="2.600" fill="none" stroke="#000" stroke-width="1.7" transform="translate(9.500 4.400) rotate(-31)"/></svg>
<span class="t" style="left:1465.40px;top:458.00px;font-size:11.5px;line-height:16px;color:#1b1b1b;letter-spacing:-0.071px;">Associations Browser</span>
<svg style="left:1439.05px;top:485.2px;" width="16.3" height="18" viewBox="0 0 16.300 18" preserveAspectRatio="none"><rect x=".850" y="2.600" width="14.600" height="14.500" rx="2" fill="none" stroke="#000" stroke-width="1.700"/><path d="M.850 6.700H15.450" stroke="#000" stroke-width="1.600"/><path d="M4.600 0V3.400M11.700 0V3.400" stroke="#000" stroke-width="1.900"/><rect x="3.900" y="8.900" width="8.500" height="5.800" fill="#000"/><path d="M6.750 8.900v5.800M9.550 8.900v5.800M3.900 11.800h8.500" stroke="#f3f3f3" stroke-width=".750"/></svg>
<span class="t" style="left:1465.40px;top:486.00px;font-size:11.5px;line-height:16px;color:#1b1b1b;letter-spacing:-0.121px;">Calendar</span>
<svg style="left:1438.3px;top:514.95px;" width="17.8" height="14.5" viewBox="0 0 17.800 14.500" preserveAspectRatio="none"><rect x=".850" y=".850" width="16.100" height="12.800" rx="1.900" fill="none" stroke="#000" stroke-width="1.700"/><circle cx="6" cy="5.600" r="1.700" fill="#000"/><path d="M3.200 10.800c.200-2.200 1.400-2.900 2.800-2.900s2.600.700 2.800 2.900Z" fill="#000"/><rect x="10.200" y="4.400" width="4.600" height="5.600" fill="#000"/></svg>
<span class="t" style="left:1465.40px;top:514.00px;font-size:11.5px;line-height:16px;color:#1b1b1b;letter-spacing:-0.126px;">Card View</span>
<svg style="left:1438.3px;top:542.2px;" width="17.8" height="16" viewBox="0 0 17.800 16" preserveAspectRatio="none"><rect x=".850" y=".850" width="16.100" height="14.300" rx="2.200" fill="none" stroke="#000" stroke-width="1.700"/><path d="M.850 4.900H16.950M5.100 .850V4.900" stroke="#000" stroke-width="1.400" fill="none"/></svg>
<span class="t" style="left:1465.40px;top:542.00px;font-size:11.5px;line-height:16px;color:#1b1b1b;letter-spacing:-0.294px;">Form Tab</span>
<svg style="left:1438.3px;top:570.45px;" width="17.8" height="15.5" viewBox="0 0 17.800 15.500" preserveAspectRatio="none"><path d="M1 .800H16.800a.500 .500 0 0 1 .400 .800L11 8.700V14.800L6.800 11.800V8.700L.600 1.600A.500 .500 0 0 1 1 .800Z" fill="#000"/></svg>
<span class="t" style="left:1465.40px;top:570.00px;font-size:11.5px;line-height:16px;color:#1b1b1b;letter-spacing:0.002px;">Funnel Chart</span>
<svg style="left:1438.3px;top:598.35px;" width="17.8" height="15.7" viewBox="0 0 17.800 15.700" preserveAspectRatio="none"><rect x=".900" y=".900" width="16" height="13.900" rx="2.200" fill="none" stroke="#000" stroke-width="1.800"/><path d="M.900 5.300H16.900M.900 10H16.900M8.900 5.300V14.800" stroke="#000" stroke-width="1.700" fill="none"/></svg>
<span class="t" style="left:1465.40px;top:598.00px;font-size:11.5px;line-height:16px;color:#1b1b1b;letter-spacing:-0.181px;">Grid</span>
<svg style="left:1438.2px;top:625.2px;" width="18" height="18" viewBox="0 0 18 18" preserveAspectRatio="none"><circle cx="11.900" cy="6.100" r="5.050000000000001" fill="none" stroke="#000" stroke-width="1.7"/><circle cx="13.300" cy="4.700" r="1.15" fill="#000"/><path d="M7.400 7.700L1.05 14.100V16.95H4.35V15.700H6.1499999999999995V13.900H7.900L10 11.600" stroke="#000" stroke-width="1.7" fill="none" stroke-linejoin="round"/></svg>
<span class="t" style="left:1465.40px;top:626.00px;font-size:11.5px;line-height:16px;color:#1b1b1b;letter-spacing:-0.284px;">Permissions</span>
<svg style="left:1438.55px;top:654.2px;" width="17.3" height="16" viewBox="0 0 17.300 16" preserveAspectRatio="none"><path d="M7.300 1.200V8.800H14.900A7.300 7.300 0 1 1 7.300 1.200Z" fill="#000"/><path d="M9 0A8 8 0 0 1 17.300 7.200H9Z" fill="#000"/><path d="M7.800 8.600L13.200 14" stroke="#f3f3f3" stroke-width="1.100"/><path d="M9.500 9H15" stroke="#f3f3f3" stroke-width=".600"/></svg>
<span class="t" style="left:1465.40px;top:654.00px;font-size:11.5px;line-height:16px;color:#1b1b1b;letter-spacing:-0.282px;">Pie Chart</span>
<svg style="left:1438.05px;top:682.4000000000001px;" width="18.3" height="15.6" viewBox="0 0 18.300 15.600" preserveAspectRatio="none"><rect x=".900" y=".900" width="16.500" height="13.800" rx="2.200" fill="none" stroke="#000" stroke-width="1.800"/><path d="M.900 5.500H17.400M.900 10.100H17.400M6.400 .900V14.700M11.900 .900V14.700" stroke="#000" stroke-width="1.700"/></svg>
<span class="t" style="left:1465.40px;top:682.00px;font-size:11.5px;line-height:16px;color:#1b1b1b;letter-spacing:-0.137px;">Pivot Grid Tab</span>
<svg style="left:1438.2px;top:710.7px;" width="18" height="15" viewBox="0 0 18 15" preserveAspectRatio="none"><path d="M1.300 1.200V13.700H16.800" stroke="#000" stroke-width="2.500" fill="none" stroke-linecap="round" stroke-linejoin="round"/><path d="M5.200 2.800H11M5.200 6.200H15M5.200 9.600H13" stroke="#000" stroke-width="2.700" stroke-linecap="round"/></svg>
<span class="t" style="left:1465.40px;top:710.00px;font-size:11.5px;line-height:16px;color:#1b1b1b;letter-spacing:-0.042px;">Standard Chart</span>
<svg style="left:1439.05px;top:737.2px;" width="16.3" height="18" viewBox="0 0 16.300 18" preserveAspectRatio="none"><rect x=".850" y="2.600" width="14.600" height="14.500" rx="2" fill="none" stroke="#000" stroke-width="1.700"/><path d="M.850 6.700H15.450" stroke="#000" stroke-width="1.600"/><path d="M4.600 0V3.400M11.700 0V3.400" stroke="#000" stroke-width="1.900"/><rect x="3.900" y="8.900" width="8.500" height="5.800" fill="#000"/><path d="M6.750 8.900v5.800M9.550 8.900v5.800M3.900 11.800h8.500" stroke="#f3f3f3" stroke-width=".750"/></svg>
<span class="t" style="left:1465.40px;top:738.00px;font-size:11.5px;line-height:16px;color:#1b1b1b;letter-spacing:-0.216px;">Timeline</span>
<svg style="left:1438.2px;top:765.0px;" width="18" height="18.4" viewBox="0 0 18 18.400" preserveAspectRatio="none"><path d="M.300 15.200L12.600 2.900 15.500 5.800 3.200 18.100Z" fill="#000" stroke="#000" stroke-width=".600" stroke-linejoin="round"/><path d="M10.300 5.900L12.500 8.100" stroke="#f3f3f3" stroke-width="1"/><path d="M3.500 0l.900 2.300 2.300.900-2.300.900-.900 2.300-.900-2.300-2.300-.900 2.300-.900ZM14.600 10.600l.900 2.100 2.100.900-2.100.900-.900 2.100-.900-2.100-2.100-.900 2.100-.900ZM8.600 0l.500 1.200 1.200.500-1.200.500-.500 1.200-.500-1.200-1.200-.500 1.200-.500Z" fill="#000"/></svg>
<span class="t" style="left:1465.40px;top:766.00px;font-size:11.5px;line-height:16px;color:#1b1b1b;letter-spacing:-0.155px;">Wizard Form</span>
<svg style="left:1436px;top:806px;" width="29" height="29" viewBox="0 0 24 24" preserveAspectRatio="none"><rect x="2" y="5" width="20" height="14.5" rx="2.2" fill="none" stroke="#000" stroke-width="2.2"/></svg>
<span class="t" style="left:1469.00px;top:816.00px;font-size:11.0px;line-height:16px;color:#1b1b1b;letter-spacing:-0.195px;font-weight:bold;">Containers</span>
<svg style="left:1724.2px;top:820px;" width="11.5" height="7" viewBox="0 0 12 8" preserveAspectRatio="none"><path d="M1.500 6.500L6 2l4.500 4.500" stroke="#222" stroke-width="1.200" fill="none"/></svg>
<svg style="left:1438.3500000000001px;top:850.45px;" width="18.7" height="15.5" viewBox="0 0 19 15" preserveAspectRatio="none"><rect x="1" y="1" width="15.300" height="10.800" rx="1.700" fill="none" stroke="#000" stroke-width="2.100"/><rect x="9.500" y="8.300" width="8.800" height="6" rx="1" fill="#f3f3f3" stroke="#1212f2" stroke-width="1.300"/></svg>
<span class="t" style="left:1465.40px;top:849.00px;font-size:11.5px;line-height:16px;color:#1b1b1b;letter-spacing:0.011px;">Field Group</span>
<svg style="left:1438.3px;top:878.35px;" width="17.8" height="13.7" viewBox="0 0 17.800 13.400" preserveAspectRatio="none"><rect x="1" y="1" width="15.800" height="11.400" rx="1.700" fill="none" stroke="#000" stroke-width="2.100"/></svg>
<span class="t" style="left:1465.40px;top:877.00px;font-size:11.5px;line-height:16px;color:#1b1b1b;letter-spacing:-0.044px;">Field Set Container</span>
<svg style="left:1439.05px;top:905.2px;" width="16.3" height="16" viewBox="0 0 16 16" preserveAspectRatio="none"><path d="M.400 1.700A1.300 1.300 0 0 1 1.700 .400H7.400a1.700 1.700 0 0 1 1.200 .500l6.500 6.500a1.700 1.700 0 0 1 0 2.400l-5.400 5.400a1.700 1.700 0 0 1-2.400 0L.900 8.700a1.700 1.700 0 0 1-.500-1.200Z" fill="#000"/><circle cx="4" cy="4" r="1.250" fill="#f3f3f3"/></svg>
<span class="t" style="left:1465.40px;top:905.00px;font-size:11.0px;line-height:16px;color:#1b1b1b;letter-spacing:-0.210px;">HTML Label</span>
<svg style="left:1439.05px;top:933.2px;" width="16.3" height="16" viewBox="0 0 16 16" preserveAspectRatio="none"><path d="M.400 1.700A1.300 1.300 0 0 1 1.700 .400H7.400a1.700 1.700 0 0 1 1.200 .500l6.500 6.500a1.700 1.700 0 0 1 0 2.400l-5.400 5.400a1.700 1.700 0 0 1-2.400 0L.900 8.700a1.700 1.700 0 0 1-.500-1.200Z" fill="#000"/><circle cx="4" cy="4" r="1.250" fill="#f3f3f3"/></svg>
<span class="t" style="left:1465.40px;top:933.00px;font-size:11.25px;line-height:16px;color:#1b1b1b;letter-spacing:-0.205px;">Label</span>
<svg style="left:1436.2px;top:990.8px;" width="28" height="9" viewBox="0 0 24 8" preserveAspectRatio="none"><rect x=".500" y="1" width="23" height="6" rx="3" fill="#000"/></svg>
<span class="t" style="left:1469.00px;top:983.30px;font-size:11.25px;line-height:16px;color:#1b1b1b;letter-spacing:-0.281px;font-weight:bold;">Controls</span>
<svg style="left:1724.2px;top:987.3px;" width="11.5" height="7" viewBox="0 0 12 8" preserveAspectRatio="none"><path d="M1.500 6.500L6 2l4.500 4.500" stroke="#222" stroke-width="1.200" fill="none"/></svg>
<svg style="left:1439.3500000000001px;top:1018.9000000000001px;" width="15.7" height="11" viewBox="0 0 16.500 11.500" preserveAspectRatio="none"><path d="M1.100 6L5.700 10.200 15.400 1.100" stroke="#000" stroke-width="2.800" fill="none"/></svg>
<span class="t" style="left:1465.40px;top:1016.00px;font-size:11.5px;line-height:16px;color:#1b1b1b;letter-spacing:-0.030px;">Association Checkbox Group</span>
<svg style="left:1439.3500000000001px;top:1046.9px;" width="15.7" height="11" viewBox="0 0 16.500 11.500" preserveAspectRatio="none"><path d="M1.100 6L5.700 10.200 15.400 1.100" stroke="#000" stroke-width="2.800" fill="none"/></svg>
<span class="t" style="left:1465.40px;top:1044.00px;font-size:11.5px;line-height:16px;color:#1b1b1b;letter-spacing:0.065px;">Association Drop Down Field</span>
<div style="left:1426px;top:1070px;width:320px;height:12px;overflow:hidden;"><span class="t" style="left:39.4px;top:2px;font-size:11.5px;line-height:16px;color:#1b1b1b;letter-spacing:-0.2px">Autocomplete Field</span><div style="left:12.300px;top:1px;width:15px;height:15px;border:2px solid #111;border-radius:50%"></div></div>
<div style="left:1431.5px;top:1082.7px;width:307px;height:17px;background:#fff;border-radius:4px;box-shadow:0 0 2px rgba(0,0,0,.28);"></div>
<svg style="left:1580.5px;top:1087.7px;" width="8" height="7" viewBox="0 0 8 7" preserveAspectRatio="none"><path d="M0 0h8L4 7Z" fill="#b5b5b5"/></svg>
<svg style="left:1578px;top:1111px;" width="14" height="6" viewBox="0 0 14 6" preserveAspectRatio="none"><g fill="#a0a0a0"><rect x="0" y="0" width="2" height="2"/><rect x="4" y="0" width="2" height="2"/><rect x="8" y="0" width="2" height="2"/><rect x="12" y="0" width="2" height="2"/><rect x="0" y="4" width="2" height="2"/><rect x="4" y="4" width="2" height="2"/><rect x="8" y="4" width="2" height="2"/><rect x="12" y="4" width="2" height="2"/></g></svg>
<div style="left:1430px;top:1121px;width:310.5px;height:37px;background:#ebebeb;border:1px solid #0067c0;border-radius:7px;"></div>
<svg style="left:1441px;top:1129px;" width="22.5" height="21" viewBox="0 0 20 18" preserveAspectRatio="none"><path d="M6.500 5V3.200a1.500 1.500 0 0 1 1.500-1.500h4a1.500 1.500 0 0 1 1.500 1.500V5" fill="none" stroke="#000" stroke-width="1.800"/><path d="M3 5h14a2 2 0 0 1 1.400.600l1 1a2 2 0 0 1 .6 1.400V10H0V8a2 2 0 0 1 .6-1.400l1-1A2 2 0 0 1 3 5Z" fill="#000"/><path d="M0 11.200h5.500v1.300h2.200v-1.300h4.600v1.300h2.200v-1.300H20V16a1.300 1.300 0 0 1-1.300 1.300H1.300A1.300 1.300 0 0 1 0 16Z" fill="#000"/></svg>
<span class="t" style="left:1470.00px;top:1131.50px;font-size:12px;line-height:17px;color:#1b1b1b;letter-spacing:0.020px;">Toolbox</span>
<svg style="left:1441px;top:1167.5px;" width="22.5" height="18.5" viewBox="0 0 20 16" preserveAspectRatio="none"><rect x=".500" y=".800" width="3.400" height="3.400" rx=".800" fill="#000"/><rect x=".500" y="6.300" width="3.400" height="3.400" rx=".800" fill="#000"/><rect x=".500" y="11.800" width="3.400" height="3.400" rx=".800" fill="#000"/><path d="M7.500 2.500h11M7.500 8h11M7.500 13.500h11" stroke="#000" stroke-width="2.300" stroke-linecap="round"/></svg>
<span class="t" style="left:1470.00px;top:1168.50px;font-size:12px;line-height:17px;color:#1b1b1b;letter-spacing:-0.269px;">Properties</span>
<svg style="left:1441px;top:1203px;" width="22" height="22" viewBox="0 0 27.500 27.500" preserveAspectRatio="none"><path d="M10.24 4.17 L10.36 1.10 L17.14 1.10 L17.26 4.17 L20.29 5.92 L23.01 4.49 L26.40 10.36 L23.80 12.00 L23.80 15.50 L26.40 17.14 L23.01 23.01 L20.29 21.58 L17.26 23.33 L17.14 26.40 L10.36 26.40 L10.24 23.33 L7.21 21.58 L4.49 23.01 L1.10 17.14 L3.70 15.50 L3.70 12.00 L1.10 10.36 L4.49 4.49 L7.21 5.92Z M8.25 13.75 a5.5 5.5 0 1 0 11.0 0 a5.5 5.5 0 1 0 -11.0 0Z" fill="#000" fill-rule="evenodd" stroke="#000" stroke-width="1.200" stroke-linejoin="round"/></svg>
<span class="t" style="left:1470.00px;top:1205.50px;font-size:12px;line-height:17px;color:#1b1b1b;letter-spacing:0.015px;">Control Options</span>
<div style="left:4.5px;top:1236.5px;width:84px;height:29px;background:#fcfcfc;border:1px solid #ebebeb;border-radius:5px;"></div>
<svg style="left:13px;top:1244.6px;" width="14" height="13" viewBox="0 0 14 13" preserveAspectRatio="none"><path d="M1 .800L13 12.200M13 .800L1 12.200" stroke="#000" stroke-width="2.500" fill="none"/></svg>
<span class="t" style="left:46.00px;top:1243.00px;font-size:11.25px;line-height:16px;color:#1b1b1b;letter-spacing:-0.252px;">Close</span>
<div style="left:1531px;top:1236.5px;width:85px;height:29px;background:#f5f5f5;border:1px solid #e7e7e7;border-radius:5px;"></div>
<svg style="left:1536px;top:1240px;" width="22" height="22" viewBox="0 0 20 20" preserveAspectRatio="none"><path d="M3.500 2h10.700l3.800 3.800V16.500a1.500 1.500 0 0 1-1.500 1.500h-13a1.500 1.500 0 0 1-1.500-1.500v-13a1.500 1.500 0 0 1 1.500-1.500Z" fill="none" stroke="#676767" stroke-width="2"/><path d="M5.500 2.300v4.200h7V2.300" fill="none" stroke="#676767" stroke-width="2"/><circle cx="10" cy="12.500" r="2.500" fill="none" stroke="#676767" stroke-width="2"/></svg>
<span class="t" style="left:1576.00px;top:1243.00px;font-size:10.5px;line-height:16px;color:#a9a9a9;letter-spacing:-0.358px;">Save</span>
<div style="left:1622px;top:1236.5px;width:130px;height:29px;background:#f5f5f5;border:1px solid #e7e7e7;border-radius:5px;"></div>
<svg style="left:1627px;top:1240px;" width="22" height="22" viewBox="0 0 20 20" preserveAspectRatio="none"><path d="M3.500 2h10.700l3.800 3.800V16.500a1.500 1.500 0 0 1-1.500 1.500h-13a1.500 1.500 0 0 1-1.500-1.500v-13a1.500 1.500 0 0 1 1.500-1.500Z" fill="none" stroke="#676767" stroke-width="2"/><path d="M5.500 2.300v4.200h7V2.300" fill="none" stroke="#676767" stroke-width="2"/><circle cx="10" cy="12.500" r="2.500" fill="none" stroke="#676767" stroke-width="2"/></svg>
<span class="t" style="left:1662.40px;top:1243.00px;font-size:11.25px;line-height:16px;color:#a9a9a9;letter-spacing:-0.202px;">Save and Close</span>
<div style="left:0px;top:292px;width:1758px;height:1px;background:rgba(0,0,0,0.06);"></div>
</body></html>
